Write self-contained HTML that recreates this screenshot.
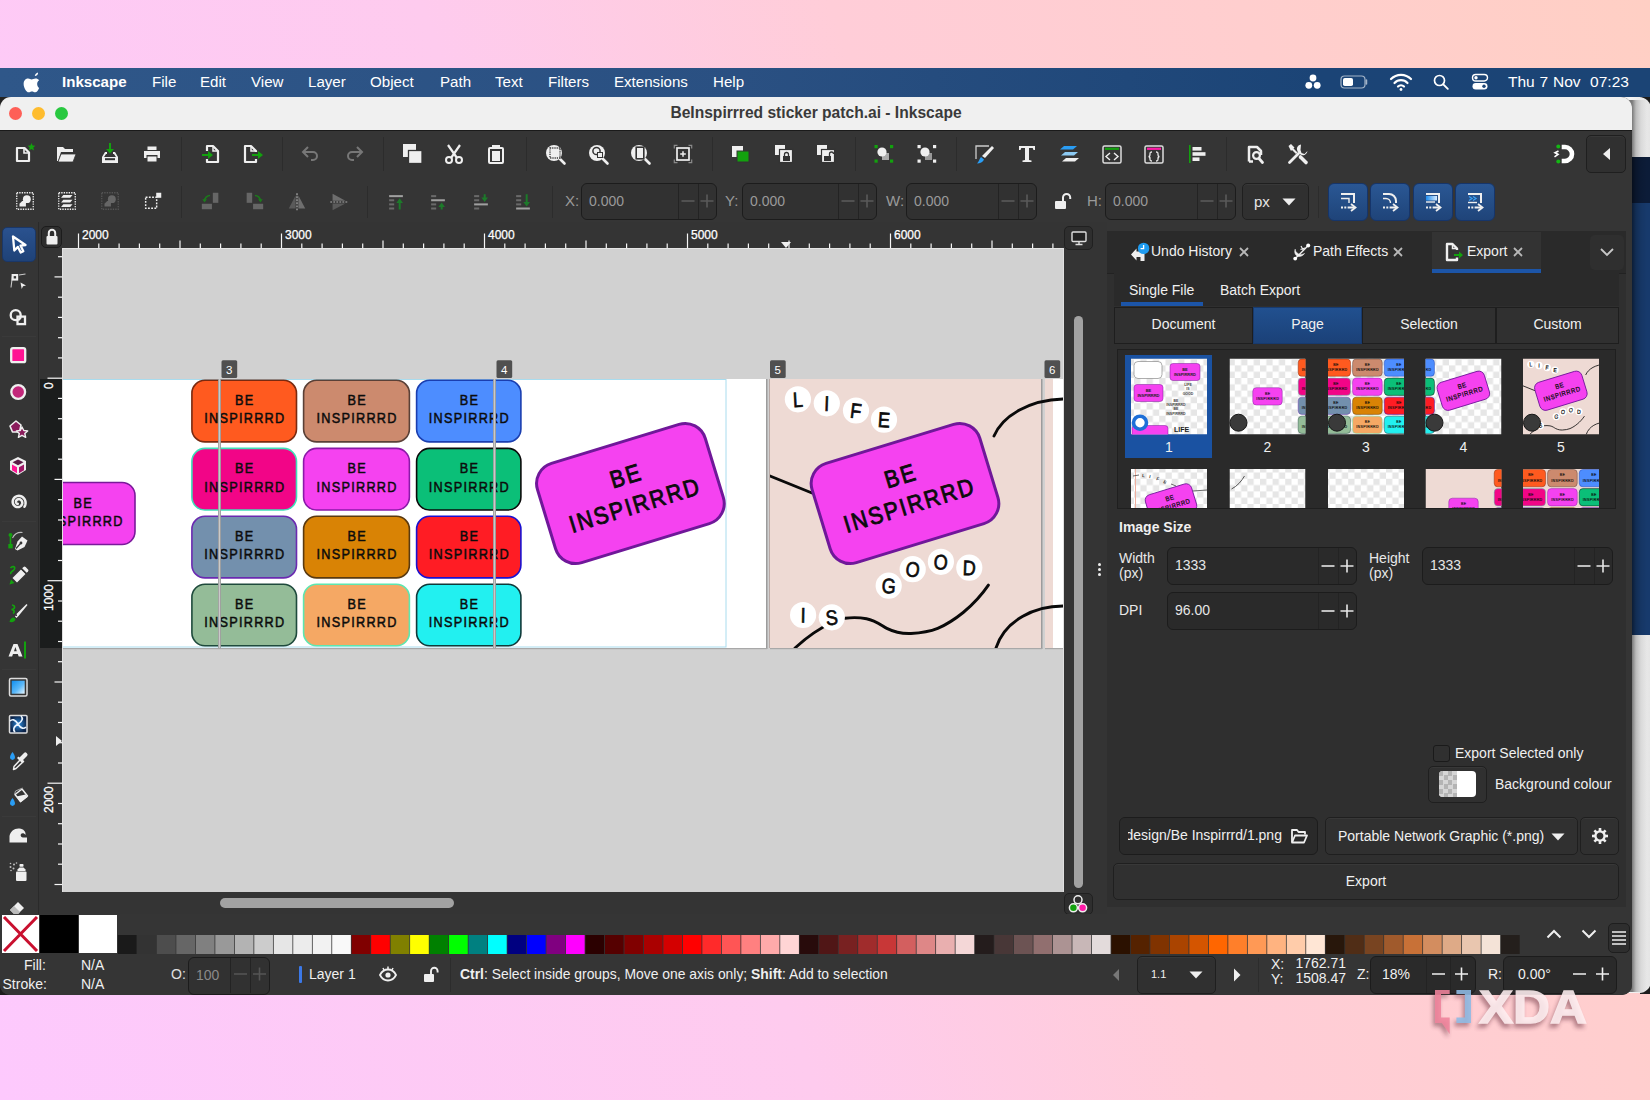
<!DOCTYPE html><html><head><meta charset="utf-8"><title>Inkscape</title><style>
*{box-sizing:border-box;margin:0;padding:0}
html,body{width:1650px;height:1100px;overflow:hidden}
body{position:relative;font-family:"Liberation Sans",sans-serif;font-size:14px;color:#e6e6e6;
 background:linear-gradient(70deg,#fdc9fd 0%,#fecbee 40%,#ffcdd8 60%,#ffcfc4 100%);}
.a{position:absolute}
.t{position:absolute;white-space:nowrap;line-height:1}
svg{position:absolute;overflow:visible}
.btn{position:absolute;background:#303030;border:1px solid #1f1f1f;border-radius:5px;box-shadow:inset 0 1px 0 rgba(255,255,255,.04)}
.inp{position:absolute;background:#2a2a2a;border:1px solid #1c1c1c;border-radius:6px}
.sep{position:absolute;width:1px;background:#2b2b2b}
</style></head><body>
<div class="a" style="left:1640px;top:97px;width:10px;height:897px;background:#1c1c1c"></div>
<div class="a" style="left:1600px;top:97px;width:50.5px;height:896px;background:linear-gradient(90deg,#f4f4f4 60%,#e4e4e4 100%);border-radius:12px;overflow:hidden"><div class="a" style="left:0;top:59.500px;width:60px;height:46px;background:#0c1c38"></div><div class="a" style="left:0;top:105.500px;width:60px;height:432.500px;background:#173a6c"></div></div>
<div class="a" style="left:0px;top:68.4px;width:1650px;height:29px;background:linear-gradient(90deg,#2f5789 0%,#2a5082 45%,#1b4476 80%,#1b4475 100%)"></div>
<div class="t" style="left:62px;top:71.95px;height:19.1px;line-height:19.1px;font-size:15.1px;color:#fff;font-weight:700;">Inkscape</div>
<div class="t" style="left:152px;top:71.95px;height:19.1px;line-height:19.1px;font-size:15.1px;color:#fff;font-weight:400;">File</div>
<div class="t" style="left:200px;top:71.95px;height:19.1px;line-height:19.1px;font-size:15.1px;color:#fff;font-weight:400;">Edit</div>
<div class="t" style="left:251px;top:71.95px;height:19.1px;line-height:19.1px;font-size:15.1px;color:#fff;font-weight:400;">View</div>
<div class="t" style="left:308px;top:71.95px;height:19.1px;line-height:19.1px;font-size:15.1px;color:#fff;font-weight:400;">Layer</div>
<div class="t" style="left:370px;top:71.95px;height:19.1px;line-height:19.1px;font-size:15.1px;color:#fff;font-weight:400;">Object</div>
<div class="t" style="left:440px;top:71.95px;height:19.1px;line-height:19.1px;font-size:15.1px;color:#fff;font-weight:400;">Path</div>
<div class="t" style="left:495px;top:71.95px;height:19.1px;line-height:19.1px;font-size:15.1px;color:#fff;font-weight:400;">Text</div>
<div class="t" style="left:548px;top:71.95px;height:19.1px;line-height:19.1px;font-size:15.1px;color:#fff;font-weight:400;">Filters</div>
<div class="t" style="left:614px;top:71.95px;height:19.1px;line-height:19.1px;font-size:15.1px;color:#fff;font-weight:400;">Extensions</div>
<div class="t" style="left:713px;top:71.95px;height:19.1px;line-height:19.1px;font-size:15.1px;color:#fff;font-weight:400;">Help</div>
<div class="t" style="left:1508px;top:71.75px;height:19.5px;line-height:19.5px;font-size:15.5px;color:#fff;font-weight:400;word-spacing:.5px">Thu 7 Nov&nbsp; 07:23</div>
<div class="a" style="left:0px;top:97px;width:14px;height:14px;background:#222"></div>
<div class="a" style="left:0px;top:982px;width:12px;height:12.5px;background:#1c1c1c"></div>
<div class="a" style="left:1626px;top:100px;width:22px;height:892px;background:linear-gradient(90deg,rgba(0,0,0,.5) 0,rgba(0,0,0,.5) 6px,rgba(0,0,0,.22) 10px,rgba(0,0,0,.08) 15px,rgba(0,0,0,0) 21px)"></div>
<div class="a" style="left:0px;top:97px;width:1632px;height:897.5px;background:#353535;border-radius:11px 11px 10px 10px;overflow:hidden"></div>
<div class="a" style="left:0px;top:97px;width:1632px;height:33.7px;background:#f0f0f0;border-radius:11px 11px 0 0;border-bottom:1.200px solid #1a1a1a"></div>
<div class="a" style="left:9.2px;top:106.5px;width:13px;height:13px;background:#fe5f57;border-radius:50%"></div>
<div class="a" style="left:32.2px;top:106.5px;width:13px;height:13px;background:#febc2e;border-radius:50%"></div>
<div class="a" style="left:55.2px;top:106.5px;width:13px;height:13px;background:#28c840;border-radius:50%"></div>
<div class="t" style="left:0;top:103px;width:1632px;text-align:center;font-size:15.600px;font-weight:700;color:#3a3a3a;line-height:20px">BeInspirrred sticker patch.ai - Inkscape</div>
<svg style="left:11.0px;top:141.8px" width="24" height="24" viewBox="-12 -12 24 24"><path d="M-6,-6h7.500l4.500,4.500v8.500h-12z" fill="none" stroke="#efefef" stroke-width="2.200" stroke-linejoin="round"/><path d="M1,-6v5h5" fill="none" stroke="#efefef" stroke-width="1.600"/><path d="M8.500,-11l1.100,2.600 2.800,.2-2.100,1.800 .7,2.800-2.500,-1.500-2.500,1.500 .7,-2.800-2.100,-1.800 2.800,-.2z" fill="#13a10e"/></svg>
<svg style="left:54.0px;top:141.8px" width="24" height="24" viewBox="-12 -12 24 24"><path d="M-9,7v-14h6l2,2h8v3h-12l-3,9z" fill="#efefef"/><path d="M-8,8l3,-8h15l-3,8z" fill="#efefef" stroke="#333" stroke-width=".8"/></svg>
<svg style="left:98.0px;top:141.8px" width="24" height="24" viewBox="-12 -12 24 24"><path d="M-8,9v-6l3,-5h2v2h-1l-2,3h12l-2,-3h-1v-2h2l3,5v6z" fill="#efefef"/><rect x="-5" y="4.2" width="10" height="2" fill="#333"/><path d="M-1,-11h2v6h3l-4,4.5-4,-4.5h3z" fill="#13a10e"/></svg>
<svg style="left:140.0px;top:141.8px" width="24" height="24" viewBox="-12 -12 24 24"><rect x="-4.500" y="-7.500" width="9" height="3.500" fill="#efefef"/><path d="M-8,-3h16v7h-2.500v-3h-11v3h-2.500z" fill="#efefef"/><rect x="-4.500" y="2.500" width="9" height="5" fill="#efefef"/></svg>
<svg style="left:199.0px;top:141.8px" width="24" height="24" viewBox="-12 -12 24 24"><path d="M-4,-3v-5h6l5,5v11h-11v-3" fill="none" stroke="#efefef" stroke-width="2.200" stroke-linejoin="round"/><path d="M2,-8v5h5" fill="none" stroke="#efefef" stroke-width="1.500"/><path d="M-9,0h6v-3l5,4-5,4v-3h-6z" fill="#13a10e"/></svg>
<svg style="left:240.0px;top:141.8px" width="24" height="24" viewBox="-12 -12 24 24"><path d="M4,-2v-1l-5,-5h-6v16h11v-3" fill="none" stroke="#efefef" stroke-width="2.200" stroke-linejoin="round"/><path d="M-1,-8v5h5" fill="none" stroke="#efefef" stroke-width="1.500"/><path d="M0,0h6v-3l5,4-5,4v-3h-6z" fill="#13a10e"/></svg>
<svg style="left:299.0px;top:141.8px" width="24" height="24" viewBox="-12 -12 24 24"><path d="M-7,-2h9a4,4 0 0 1 0,8h-2" fill="none" stroke="#777" stroke-width="2"/><path d="M-3,-7l-5,5 5,5" fill="none" stroke="#777" stroke-width="2"/></svg>
<svg style="left:342.0px;top:141.8px" width="24" height="24" viewBox="-12 -12 24 24"><path d="M7,-2h-9a4,4 0 0 0 0,8h2" fill="none" stroke="#777" stroke-width="2"/><path d="M3,-7l5,5-5,5" fill="none" stroke="#777" stroke-width="2"/></svg>
<svg style="left:399.0px;top:141.8px" width="24" height="24" viewBox="-12 -12 24 24"><rect x="-8" y="-10" width="13" height="13" fill="#efefef" /><rect x="-2.500" y="-3.500" width="13.500" height="13" fill="#efefef" stroke="#353535" stroke-width="1.300"/></svg>
<svg style="left:442.0px;top:141.8px" width="24" height="24" viewBox="-12 -12 24 24"><path d="M-6,-9l9,13M6,-9l-9,13" stroke="#efefef" stroke-width="2.2" fill="none"/><circle cx="-5" cy="6" r="3" fill="none" stroke="#efefef" stroke-width="2"/><circle cx="5" cy="6" r="3" fill="none" stroke="#efefef" stroke-width="2"/></svg>
<svg style="left:484.0px;top:141.8px" width="24" height="24" viewBox="-12 -12 24 24"><rect x="-7" y="-6" width="14" height="15" rx="1" fill="none" stroke="#efefef" stroke-width="2"/><rect x="-4" y="-9" width="8" height="4" fill="#efefef"/><rect x="-4" y="-3" width="8" height="10" fill="#efefef"/></svg>
<svg style="left:543.0px;top:141.8px" width="24" height="24" viewBox="-12 -12 24 24"><circle cx="-1" cy="-1" r="8" fill="#efefef"/><path d="M5,5l4.5,4.5" stroke="#efefef" stroke-width="2.6" stroke-linecap="round"/><rect x="-5" y="-6" width="10" height="10" fill="none" stroke="#333" stroke-width="1.300" stroke-dasharray="1.200 1"/></svg>
<svg style="left:586.0px;top:141.8px" width="24" height="24" viewBox="-12 -12 24 24"><circle cx="-1" cy="-1" r="8" fill="#efefef"/><path d="M5,5l4.5,4.5" stroke="#efefef" stroke-width="2.6" stroke-linecap="round"/><circle cx="-1.500" cy="-3" r="3.600" fill="none" stroke="#333" stroke-width="1.500"/><rect x="-1" y="-2" width="6" height="6" fill="#333"/><rect x="0" y="-1" width="4" height="4" fill="#efefef"/></svg>
<svg style="left:628.0px;top:141.8px" width="24" height="24" viewBox="-12 -12 24 24"><circle cx="-1" cy="-1" r="8" fill="#efefef"/><path d="M5,5l4.5,4.5" stroke="#efefef" stroke-width="2.6" stroke-linecap="round"/><rect x="-3.800" y="-6.800" width="7.600" height="11.600" fill="none" stroke="#333" stroke-width="1.600"/></svg>
<svg style="left:671.0px;top:141.8px" width="24" height="24" viewBox="-12 -12 24 24"><rect x="-6" y="-6" width="12" height="12" fill="none" stroke="#efefef" stroke-width="1.700"/><path d="M-2.800,0h5.600M0,-2.800v5.600" stroke="#efefef" stroke-width="1.500"/><path d="M-8.700,-5.500v-3.200h3.200M5.500,-8.700h3.200v3.200M8.700,5.500v3.200h-3.200M-5.500,8.700h-3.200v-3.200" fill="none" stroke="#8a8a8a" stroke-width="1.200"/></svg>
<svg style="left:729.0px;top:141.8px" width="24" height="24" viewBox="-12 -12 24 24"><rect x="-9" y="-8" width="11" height="11" fill="#efefef"/><rect x="-4" y="-3" width="12" height="11" fill="#13a10e" stroke="#333" stroke-width="1"/></svg>
<svg style="left:771.5px;top:141.8px" width="24" height="24" viewBox="-12 -12 24 24"><rect x="-9" y="-9" width="10" height="10" fill="#efefef"/><rect x="-4.5" y="-4.5" width="13" height="13" fill="#efefef" stroke="#333" stroke-width="1.2"/><rect x="-1" y="2" width="7" height="5" fill="#333"/><path d="M.5,2v-1.5a2,2 0 0 1 4,0v1.5" fill="none" stroke="#333" stroke-width="1.3"/></svg>
<svg style="left:814.0px;top:141.8px" width="24" height="24" viewBox="-12 -12 24 24"><rect x="-9" y="-9" width="10" height="10" fill="#efefef"/><rect x="-4.5" y="-4.5" width="13" height="13" fill="#efefef" stroke="#333" stroke-width="1.2"/><rect x="-2" y="2" width="7" height="5" fill="#333"/><path d="M3.5,2v-2a2,2 0 0 1 4,0" fill="none" stroke="#333" stroke-width="1.3"/></svg>
<svg style="left:872.0px;top:141.8px" width="24" height="24" viewBox="-12 -12 24 24"><rect x="-2" y="-1" width="7" height="7" fill="#aaa"/><circle cx="-2" cy="-2" r="4.6" fill="#efefef"/><rect x="-9.5" y="-9" width="3.2" height="3.2" fill="#13a10e"/><rect x="6" y="-9" width="3.2" height="3.2" fill="#13a10e"/><rect x="-9.5" y="5.5" width="3.2" height="3.2" fill="#13a10e"/><rect x="6" y="5.5" width="3.2" height="3.2" fill="#13a10e"/></svg>
<svg style="left:915.0px;top:141.8px" width="24" height="24" viewBox="-12 -12 24 24"><rect x="-2" y="-1" width="7" height="7" fill="#999"/><circle cx="-2" cy="-2" r="4.6" fill="#efefef"/><rect x="-9.5" y="-9" width="3.2" height="3.2" fill="#efefef"/><rect x="6" y="-9" width="3.2" height="3.2" fill="#efefef"/><rect x="-9.5" y="5.5" width="3.2" height="3.2" fill="#efefef"/><rect x="6" y="5.5" width="3.2" height="3.2" fill="#efefef"/></svg>
<svg style="left:972.0px;top:141.8px" width="24" height="24" viewBox="-12 -12 24 24"><path d="M-8,5v-13h13" fill="none" stroke="#ccc" stroke-width="1.3"/><path d="M8,-8l2,2-9,10-3,-2z" fill="#efefef"/><path d="M-3,3l3,2.4c-1,2.5-4,4-7,4 2,-1.5 2,-4 4,-6.4z" fill="#2a9df4"/></svg>
<svg style="left:1015.0px;top:141.8px" width="24" height="24" viewBox="-12 -12 24 24"><path d="M-8,-8h16v4h-1.5l-.8,-2h-3.7v12l2.5,.6v1.4h-9v-1.4l2.5,-.6v-12h-3.700l-.8,2h-1.5z" fill="#efefef"/></svg>
<svg style="left:1057.0px;top:141.8px" width="24" height="24" viewBox="-12 -12 24 24"><path d="M-5,-8h13l-4,3.6h-13z" fill="#2a9df4"/><path d="M-4,-2h13l-4,3.600h-13z" fill="#8ccaf3"/><path d="M-3,4h13l-4,3.600h-13z" fill="#efefef"/></svg>
<svg style="left:1100.0px;top:141.8px" width="24" height="24" viewBox="-12 -12 24 24"><rect x="-9" y="-8" width="18" height="17" rx="1.5" fill="none" stroke="#ddd" stroke-width="1.5"/><rect x="-7" y="-6.300" width="14" height="2.200" fill="#13a10e"/><path d="M-2,-1l-4,3.500 4,3.500M2,-1l4,3.500-4,3.500" fill="none" stroke="#efefef" stroke-width="1.4"/></svg>
<svg style="left:1142.0px;top:141.8px" width="24" height="24" viewBox="-12 -12 24 24"><rect x="-9" y="-8" width="18" height="17" rx="1.5" fill="none" stroke="#ddd" stroke-width="1.5"/><rect x="-7" y="-6.300" width="14" height="2.200" fill="#ff1aa8"/><path d="M-2,-2c-2,0-2,.5-2,2s0,2.500-1.500,2.500c1.500,0 1.500,1 1.500,2.500s0,2 2,2M2,-2c2,0 2,.5 2,2s0,2.500 1.500,2.500c-1.500,0-1.500,1-1.500,2.500s0,2-2,2" fill="none" stroke="#efefef" stroke-width="1.300"/></svg>
<svg style="left:1185.0px;top:141.8px" width="24" height="24" viewBox="-12 -12 24 24"><rect x="-8" y="-9" width="1.600" height="18" fill="#13a10e"/><rect x="-4.500" y="-7" width="9" height="3.600" fill="#efefef"/><rect x="-4.500" y="-1.800" width="13" height="3.600" fill="#efefef"/><rect x="-4.500" y="3.400" width="7" height="3.600" fill="#efefef"/></svg>
<svg style="left:1243.0px;top:141.8px" width="24" height="24" viewBox="-12 -12 24 24"><path d="M-6,7.500v-14.500h8l4,4v4" fill="none" stroke="#efefef" stroke-width="2.500" stroke-linejoin="round"/><path d="M-6,7.500h4" stroke="#efefef" stroke-width="2.500"/><circle cx="1.500" cy="1.500" r="3.400" fill="none" stroke="#efefef" stroke-width="2.200"/><path d="M4,4.500l3.500,4" stroke="#efefef" stroke-width="2.800" stroke-linecap="round"/></svg>
<svg style="left:1286.0px;top:141.8px" width="24" height="24" viewBox="-12 -12 24 24"><path d="M-8.500,8.500l9,-9" stroke="#efefef" stroke-width="2.800" stroke-linecap="round"/><path d="M3,-9.500a4.600,4.600 0 0 0-3.500,7l3,3a4.600,4.600 0 0 0 7,-3.500l-3,3-3,-1-1,-3z" fill="#efefef"/><path d="M-9.500,-8l2.500,-2 3.500,3.500-1,1 4,4-1.500,1.500-4,-4-1,1z" fill="#efefef"/><path d="M2.500,3l5.500,5.500" stroke="#efefef" stroke-width="3.600" stroke-linecap="round"/></svg>
<svg style="left:1553.3px;top:141.8px" width="24" height="24" viewBox="-12 -12 24 24"><path d="M-3.300,-7H0A7,7 0 0 1 0,7H-3.300" fill="none" stroke="#fff" stroke-width="4.600"/><circle cx="-6.700" cy="-7.500" r="2" fill="#14b814"/><circle cx="-6.700" cy="7.500" r="2" fill="#14b814"/><path d="M-6.500,-3l-3.500,1.800 3,1.600-3.500,2.400" fill="none" stroke="#fff" stroke-width="1.600"/></svg>
<div class="a" style="left:181px;top:137px;width:1px;height:34px;background:#2c2c2c"></div>
<div class="a" style="left:282px;top:137px;width:1px;height:34px;background:#2c2c2c"></div>
<div class="a" style="left:383px;top:137px;width:1px;height:34px;background:#2c2c2c"></div>
<div class="a" style="left:526px;top:137px;width:1px;height:34px;background:#2c2c2c"></div>
<div class="a" style="left:712px;top:137px;width:1px;height:34px;background:#2c2c2c"></div>
<div class="a" style="left:855px;top:137px;width:1px;height:34px;background:#2c2c2c"></div>
<div class="a" style="left:956px;top:137px;width:1px;height:34px;background:#2c2c2c"></div>
<div class="a" style="left:1226px;top:137px;width:1px;height:34px;background:#2c2c2c"></div>
<div class="btn" style="left:1586px;top:134.5px;width:40px;height:38px;"></div>
<svg style="left:1594.5px;top:141.5px" width="24" height="24" viewBox="-12 -12 24 24"><path d="M3,-6v12l-7,-6z" fill="#efefef"/></svg>
<svg style="left:13.5px;top:189.5px" width="22" height="22" viewBox="-12 -12 24 24"><rect x="-9" y="-9" width="18" height="18" fill="none" stroke="#efefef" stroke-width="1.400" stroke-dasharray="1.500 1.200"/><circle cx="2" cy="-2" r="4.300" fill="#efefef"/><path d="M-6,6v-3l3,-3h4v6z" fill="#efefef"/></svg>
<svg style="left:55.5px;top:189.5px" width="22" height="22" viewBox="-12 -12 24 24"><rect x="-9" y="-9" width="18" height="18" fill="none" stroke="#efefef" stroke-width="1.400" stroke-dasharray="1.500 1.200"/><path d="M-4,-6.500h10l-2.500,3h-10z M-4,-1.500h10l-2.500,3h-10z M-4,3.500h10l-2.500,3h-10z" fill="#efefef"/></svg>
<svg style="left:98.5px;top:189.5px" width="22" height="22" viewBox="-12 -12 24 24"><rect x="-9" y="-9" width="18" height="18" fill="none" stroke="#555" stroke-width="1.400" stroke-dasharray="1.500 1.200"/><circle cx="2" cy="-2" r="4.300" fill="#666"/><path d="M-6,6v-3l3,-3h4v6z" fill="#666"/></svg>
<svg style="left:141.5px;top:189.5px" width="22" height="22" viewBox="-12 -12 24 24"><rect x="-8" y="-4" width="12" height="12" fill="none" stroke="#efefef" stroke-width="1.600" stroke-dasharray="2 1.500"/><rect x="3.500" y="-9" width="5.500" height="5.500" fill="#efefef"/></svg>
<svg style="left:199.5px;top:189.5px" width="22" height="22" viewBox="-12 -12 24 24"><rect x="2" y="-9" width="6" height="11" fill="#666"/><rect x="-10" y="3" width="11" height="6" fill="#666"/><path d="M-1,-6a6,6 0 0 0-6,6" fill="none" stroke="#1c7a1c" stroke-width="1.800"/><path d="M-9.500,-2l2.500,3.500 2.500,-3.500z" fill="#1c7a1c"/></svg>
<svg style="left:242.5px;top:189.5px" width="22" height="22" viewBox="-12 -12 24 24"><rect x="-8" y="-9" width="6" height="11" fill="#666"/><rect x="-1" y="3" width="11" height="6" fill="#666"/><path d="M1,-6a6,6 0 0 1 6,6" fill="none" stroke="#1c7a1c" stroke-width="1.800"/><path d="M9.500,-2l-2.500,3.500-2.500,-3.500z" fill="#1c7a1c"/></svg>
<svg style="left:285.5px;top:190.5px" width="22" height="22" viewBox="-12 -12 24 24"><path d="M-1.500,-7v14h-7.500z" fill="#5a5a5a"/><path d="M1.500,-7v14h7.500z" fill="#6e6e6e"/><path d="M0,-9.500v19" stroke="#b0b0b0" stroke-width="1.300" stroke-dasharray="2 1.300"/></svg>
<svg style="left:327.5px;top:190.5px" width="22" height="22" viewBox="-12 -12 24 24"><path d="M-7,-1.500h14l-14,-7.500z" fill="#6e6e6e"/><path d="M-7,1.500h14l-14,7.500z" fill="#5a5a5a"/><path d="M-9.500,0h19" stroke="#b0b0b0" stroke-width="1.300" stroke-dasharray="2 1.300"/></svg>
<svg style="left:384.5px;top:190.5px" width="22" height="22" viewBox="-12 -12 24 24"><rect x="-7.500" y="-7.5" width="15" height="2.200" fill="#a0a0a0"/><rect x="-7.500" y="-3" width="5.500" height="2.200" fill="#6a6a6a"/><rect x="-7.500" y="1.5" width="5.500" height="2.200" fill="#6a6a6a"/><rect x="-7.500" y="6" width="5.500" height="2.200" fill="#6a6a6a"/><path d="M4,8.2V-0.5" stroke="#1d7a2a" stroke-width="2.200"/><path d="M0.3999999999999999,1.0l3.600,-5 3.600,5z" fill="#1d7a2a"/></svg>
<svg style="left:426.5px;top:190.5px" width="22" height="22" viewBox="-12 -12 24 24"><rect x="-7.500" y="-7.5" width="5.500" height="2.200" fill="#6a6a6a"/><rect x="-7.500" y="-3" width="15" height="2.200" fill="#a0a0a0"/><rect x="-7.500" y="1.5" width="5.500" height="2.200" fill="#6a6a6a"/><rect x="-7.500" y="6" width="5.500" height="2.200" fill="#6a6a6a"/><path d="M4,8.2V4" stroke="#1d7a2a" stroke-width="2.200"/><path d="M0.3999999999999999,5.5l3.600,-5 3.600,5z" fill="#1d7a2a"/></svg>
<svg style="left:469.5px;top:190.5px" width="22" height="22" viewBox="-12 -12 24 24"><rect x="-7.500" y="-7.5" width="5.500" height="2.200" fill="#6a6a6a"/><rect x="-7.500" y="-3" width="5.500" height="2.200" fill="#6a6a6a"/><rect x="-7.500" y="1.5" width="15" height="2.200" fill="#a0a0a0"/><rect x="-7.500" y="6" width="5.500" height="2.200" fill="#6a6a6a"/><path d="M4,-8.5V-3.5" stroke="#1d7a2a" stroke-width="2.200"/><path d="M0.3999999999999999,-5.0l3.600,5 3.600,-5z" fill="#1d7a2a"/></svg>
<svg style="left:511.5px;top:190.5px" width="22" height="22" viewBox="-12 -12 24 24"><rect x="-7.500" y="-7.5" width="5.500" height="2.200" fill="#6a6a6a"/><rect x="-7.500" y="-3" width="5.500" height="2.200" fill="#6a6a6a"/><rect x="-7.500" y="1.5" width="5.500" height="2.200" fill="#6a6a6a"/><rect x="-7.500" y="6" width="15" height="2.200" fill="#a0a0a0"/><path d="M4,-8.5V1.5" stroke="#1d7a2a" stroke-width="2.200"/><path d="M0.3999999999999999,0.0l3.600,5 3.600,-5z" fill="#1d7a2a"/></svg>
<div class="a" style="left:181px;top:186px;width:1px;height:32px;background:#2c2c2c"></div>
<div class="a" style="left:367px;top:186px;width:1px;height:32px;background:#2c2c2c"></div>
<div class="a" style="left:552px;top:186px;width:1px;height:32px;background:#2c2c2c"></div>
<div class="a" style="left:1318px;top:186px;width:1px;height:32px;background:#2c2c2c"></div>
<div class="t" style="left:565px;top:191.25px;height:19px;line-height:19px;font-size:15px;color:#9a9a9a;font-weight:400;">X:</div>
<div class="inp" style="left:581px;top:182.5px;width:136px;height:37.5px;background:#313131"></div>
<div class="t" style="left:589px;top:191.75px;height:18px;line-height:18px;font-size:14px;color:#9a9a9a;font-weight:400;">0.000</div>
<div class="a" style="left:678px;top:183.5px;width:1px;height:35.5px;background:#232323"></div>
<div class="a" style="left:697.5px;top:183.5px;width:1px;height:35.5px;background:#232323"></div>
<svg style="left:680px;top:193.25px" width="16" height="16" viewBox="-8 -8 16 16"><path d="M-6.500,0h13" stroke="#5a5a5a" stroke-width="1.600"/></svg>
<svg style="left:699px;top:193.25px" width="16" height="16" viewBox="-8 -8 16 16"><path d="M-6.500,0h13M0,-6.500v13" stroke="#5a5a5a" stroke-width="1.600"/></svg>
<div class="t" style="left:725px;top:191.25px;height:19px;line-height:19px;font-size:15px;color:#9a9a9a;font-weight:400;">Y:</div>
<div class="inp" style="left:742px;top:182.5px;width:135px;height:37.5px;background:#313131"></div>
<div class="t" style="left:750px;top:191.75px;height:18px;line-height:18px;font-size:14px;color:#9a9a9a;font-weight:400;">0.000</div>
<div class="a" style="left:838px;top:183.5px;width:1px;height:35.5px;background:#232323"></div>
<div class="a" style="left:857.5px;top:183.5px;width:1px;height:35.5px;background:#232323"></div>
<svg style="left:840px;top:193.25px" width="16" height="16" viewBox="-8 -8 16 16"><path d="M-6.500,0h13" stroke="#5a5a5a" stroke-width="1.600"/></svg>
<svg style="left:859px;top:193.25px" width="16" height="16" viewBox="-8 -8 16 16"><path d="M-6.500,0h13M0,-6.500v13" stroke="#5a5a5a" stroke-width="1.600"/></svg>
<div class="t" style="left:886px;top:191.25px;height:19px;line-height:19px;font-size:15px;color:#9a9a9a;font-weight:400;">W:</div>
<div class="inp" style="left:906px;top:182.5px;width:131px;height:37.5px;background:#313131"></div>
<div class="t" style="left:914px;top:191.75px;height:18px;line-height:18px;font-size:14px;color:#9a9a9a;font-weight:400;">0.000</div>
<div class="a" style="left:998px;top:183.5px;width:1px;height:35.5px;background:#232323"></div>
<div class="a" style="left:1017.5px;top:183.5px;width:1px;height:35.5px;background:#232323"></div>
<svg style="left:1000px;top:193.25px" width="16" height="16" viewBox="-8 -8 16 16"><path d="M-6.500,0h13" stroke="#5a5a5a" stroke-width="1.600"/></svg>
<svg style="left:1019px;top:193.25px" width="16" height="16" viewBox="-8 -8 16 16"><path d="M-6.500,0h13M0,-6.500v13" stroke="#5a5a5a" stroke-width="1.600"/></svg>
<div class="t" style="left:1087px;top:191.25px;height:19px;line-height:19px;font-size:15px;color:#9a9a9a;font-weight:400;">H:</div>
<div class="inp" style="left:1105px;top:182.5px;width:131px;height:37.5px;background:#313131"></div>
<div class="t" style="left:1113px;top:191.75px;height:18px;line-height:18px;font-size:14px;color:#9a9a9a;font-weight:400;">0.000</div>
<div class="a" style="left:1197px;top:183.5px;width:1px;height:35.5px;background:#232323"></div>
<div class="a" style="left:1216.5px;top:183.5px;width:1px;height:35.5px;background:#232323"></div>
<svg style="left:1199px;top:193.25px" width="16" height="16" viewBox="-8 -8 16 16"><path d="M-6.500,0h13" stroke="#5a5a5a" stroke-width="1.600"/></svg>
<svg style="left:1218px;top:193.25px" width="16" height="16" viewBox="-8 -8 16 16"><path d="M-6.500,0h13M0,-6.500v13" stroke="#5a5a5a" stroke-width="1.600"/></svg>
<svg style="left:1051.0px;top:188.5px" width="24" height="24" viewBox="-12 -12 24 24"><rect x="-8" y="0" width="11" height="8" rx="1" fill="#efefef"/><path d="M0,0v-3.500a3.600,3.600 0 0 1 7.200,0v1.500" fill="none" stroke="#efefef" stroke-width="2"/></svg>
<div class="btn" style="left:1242px;top:183px;width:67px;height:37px;"></div>
<div class="t" style="left:1254px;top:191.5px;height:19px;line-height:19px;font-size:15px;color:#e6e6e6;font-weight:400;">px</div>
<svg style="left:1277.0px;top:189.5px" width="24" height="24" viewBox="-12 -12 24 24"><path d="M-6.500,-3.500h13l-6.500,7z" fill="#efefef"/></svg>
<div class="a" style="left:1327.5px;top:182.5px;width:40px;height:38px;background:linear-gradient(#2a5794,#1f4479);border:1px solid #16356a;border-radius:6px"></div>
<div class="a" style="left:1370px;top:182.5px;width:40px;height:38px;background:linear-gradient(#2a5794,#1f4479);border:1px solid #16356a;border-radius:6px"></div>
<div class="a" style="left:1412.5px;top:182.5px;width:40px;height:38px;background:linear-gradient(#2a5794,#1f4479);border:1px solid #16356a;border-radius:6px"></div>
<div class="a" style="left:1455px;top:182.5px;width:40px;height:38px;background:linear-gradient(#2a5794,#1f4479);border:1px solid #16356a;border-radius:6px"></div>
<svg style="left:1335.5px;top:189.0px" width="24" height="24" viewBox="-12 -12 24 24"><path d="M-7,-7h13v9" fill="none" stroke="#efefef" stroke-width="2"/><path d="M-7,-2.500h8v4.500" fill="none" stroke="#efefef" stroke-width="1.400"/><path d="M-7,6.500h8" stroke="#efefef" stroke-width="2" stroke-dasharray="2 1.300"/><path d="M1,6.500h5" stroke="#efefef" stroke-width="2"/><path d="M3,3l4.500,3.500-4.500,3.500" fill="none" stroke="#efefef" stroke-width="1.800"/></svg>
<svg style="left:1378.0px;top:189.0px" width="24" height="24" viewBox="-12 -12 24 24"><path d="M-7,-7h6a7,7 0 0 1 7,7v2" fill="none" stroke="#efefef" stroke-width="2"/><path d="M-7,-2.500h3a4.500,4.500 0 0 1 4.500,4.500" fill="none" stroke="#efefef" stroke-width="1.400"/><path d="M-7,6.500h8" stroke="#efefef" stroke-width="2" stroke-dasharray="2 1.300"/><path d="M1,6.500h5" stroke="#efefef" stroke-width="2"/><path d="M3,3l4.500,3.500-4.500,3.500" fill="none" stroke="#efefef" stroke-width="1.800"/></svg>
<svg style="left:1420.5px;top:189.0px" width="24" height="24" viewBox="-12 -12 24 24"><defs><linearGradient id="bg3" x1="0" x2="1"><stop offset="0" stop-color="#1d8cf0"/><stop offset="1" stop-color="#d8ecff"/></linearGradient></defs><path d="M-7,-7h13v9" fill="none" stroke="#efefef" stroke-width="2"/><rect x="-7" y="-5" width="11" height="4.500" fill="url(#bg3)"/><path d="M-7,1h9" stroke="#efefef" stroke-width="1.400"/><path d="M-7,6.500h8" stroke="#efefef" stroke-width="2" stroke-dasharray="2 1.300"/><path d="M1,6.500h5" stroke="#efefef" stroke-width="2"/><path d="M3,3l4.500,3.500-4.500,3.500" fill="none" stroke="#efefef" stroke-width="1.800"/></svg>
<svg style="left:1463.0px;top:189.0px" width="24" height="24" viewBox="-12 -12 24 24"><path d="M-7,-7h13v9" fill="none" stroke="#efefef" stroke-width="2"/><path d="M-6,-4.500l3,2-3,2M-2,-4.500l3,2-3,2" fill="none" stroke="#3aa0f5" stroke-width="1.300"/><path d="M-7,1.500h9" stroke="#efefef" stroke-width="1.400"/><path d="M-7,6.500h8" stroke="#efefef" stroke-width="2" stroke-dasharray="2 1.300"/><path d="M1,6.500h5" stroke="#efefef" stroke-width="2"/><path d="M3,3l4.500,3.500-4.500,3.500" fill="none" stroke="#efefef" stroke-width="1.800"/></svg>
<div class="a" style="left:0px;top:222px;width:38px;height:692px;background:#353535"></div>
<div class="a" style="left:38px;top:222px;width:1px;height:692px;background:#2a2a2a"></div>
<div class="a" style="left:1.5px;top:226.5px;width:34.5px;height:35.5px;background:linear-gradient(#2a528f,#1f4278);border:1px solid #1a3768;border-radius:5px"></div>
<div class="a" style="left:0;top:222px;width:38px;height:692px;overflow:hidden">
<svg style="left:6px;top:10px" width="24" height="24" viewBox="-12 -12 24 24"><path d="M-5,-7.500l1.300,14 3.600,-3.600 2.800,5.600 2.600,-1.300-2.800,-5.600 5,-.6z" fill="#1f4a87" stroke="#fff" stroke-width="2.300" stroke-linejoin="round"/></svg>
<svg style="left:6px;top:47px" width="24" height="24" viewBox="-12 -12 24 24"><path d="M-7,6.500l1.500,-12M1,-6l6.500,-1" fill="none" stroke="#c8c8c8" stroke-width="1.100"/><rect x="-6.400" y="-7" width="6.600" height="6.600" fill="#efefef"/><rect x="-4.300" y="-4.900" width="2.400" height="2.400" fill="#353535"/><path d="M2.500,1.500l5.500,3-3,.7-1.300,2.800z" fill="#efefef"/></svg>
<svg style="left:6px;top:84px" width="24" height="24" viewBox="-12 -12 24 24"><circle cx="-2.300" cy="-2.800" r="5" fill="none" stroke="#efefef" stroke-width="2.300"/><rect x="-.500" y="-1.400" width="7.500" height="7.500" fill="none" stroke="#efefef" stroke-width="2.300"/><path d="M.600,2.500l2.500,-2.700" stroke="#efefef" stroke-width="1.200"/></svg>
<svg style="left:6px;top:121px" width="24" height="24" viewBox="-12 -12 24 24"><rect x="-6.800" y="-6.800" width="14" height="14" rx="1.800" fill="#ff1493" stroke="#efefef" stroke-width="2.300"/></svg>
<svg style="left:6px;top:158px" width="24" height="24" viewBox="-12 -12 24 24"><circle cx="0.200" cy="0" r="6.900" fill="#c2277a" stroke="#efefef" stroke-width="2.300"/></svg>
<svg style="left:6px;top:195px" width="24" height="24" viewBox="-12 -12 24 24"><path d="M-8,-3l6,-5 5,4-1.500,7h-7z" fill="#8a1c5c" stroke="#efefef" stroke-width="1.600" stroke-linejoin="round"/><path d="M4,-2l1.800,3.500 3.900,.4-2.900,2.600 .9,3.800-3.700,-2-3.600,2 .9,-3.800-2.900,-2.600 3.900,-.4z" fill="#8a1c5c" stroke="#efefef" stroke-width="1.400" stroke-linejoin="round"/></svg>
<svg style="left:6px;top:232px" width="24" height="24" viewBox="-12 -12 24 24"><path d="M0,-9l8,4v9l-8,5-8,-5v-9z" fill="#efefef"/><path d="M0,-6.500l5.500,2.800-5.500,3-5.500,-3z" fill="#5a1a45"/><path d="M-6,-1.500l5,2.800v6l-5,-3.100z" fill="#ff1493"/><path d="M6,-1.500l-5,2.800v6l5,-3.100z" fill="#a01868"/></svg>
<svg style="left:6px;top:268px" width="24" height="24" viewBox="-12 -12 24 24"><path d="M-0.19,1.82 L-0.47,1.80 L-0.75,1.72 L-1.03,1.60 L-1.29,1.41 L-1.53,1.18 L-1.73,0.90 L-1.88,0.58 L-1.98,0.22 L-2.03,-0.17 L-2.00,-0.56 L-1.91,-0.96 L-1.74,-1.36 L-1.50,-1.73 L-1.20,-2.06 L-0.83,-2.35 L-0.41,-2.58 L0.05,-2.75 L0.55,-2.83 L1.07,-2.83 L1.60,-2.75 L2.12,-2.57 L2.62,-2.30 L3.07,-1.95 L3.47,-1.52 L3.80,-1.02 L4.05,-0.45 L4.21,0.16 L4.27,0.80 L4.22,1.46 L4.06,2.11 L3.79,2.74 L3.41,3.33 L2.94,3.86 L2.37,4.31 L1.72,4.67 L1.01,4.93 L0.26,5.07 L-0.52,5.09 L-1.31,4.97 L-2.08,4.73 L-2.82,4.36 L-3.49,3.86 L-4.09,3.25 L-4.58,2.54 L-4.96,1.75 L-5.21,0.90 L-5.32,-0.00 L-5.28,-0.92 L-5.09,-1.84 L-4.75,-2.72 L-4.27,-3.55 L-3.64,-4.30 L-2.90,-4.94 L-2.04,-5.47 L-1.11,-5.86 L-0.10,-6.09 L0.94,-6.15 L1.99,-6.05 L3.03,-5.77 L4.01,-5.33 L4.93,-4.72 L5.74,-3.96 L6.43,-3.07 L6.98,-2.07 L7.36,-0.98 L7.56,0.17 L7.57,1.35 L7.39,2.53 L7.01,3.68 L6.45,4.77" fill="none" stroke="#efefef" stroke-width="2.500" stroke-linecap="round"/></svg>
<svg style="left:6px;top:306px" width="24" height="24" viewBox="-12 -12 24 24"><path d="M-7.500,5v-8" stroke="#13a10e" stroke-width="1.600"/><circle cx="-7.500" cy="-5" r="2" fill="#13a10e"/><rect x="-9.700" y="4" width="4.400" height="4.400" fill="#13a10e"/><path d="M-5.500,-2c2,-4 6,-6 10,-5.500" fill="none" stroke="#bbb" stroke-width="1.100"/><path d="M4,-3.500l5.500,4-3,6.500-7,3.500-2.500,-1.500 2.500,-7.500z" fill="#efefef"/><path d="M-2,8.500l4.500,-5" stroke="#353535" stroke-width="1.200"/><circle cx="3" cy="3" r="1.400" fill="#353535"/></svg>
<svg style="left:6px;top:342px" width="24" height="24" viewBox="-12 -12 24 24"><path d="M-7.500,-8c2,-2.500 5,-1.500 4,1s-5,2.500-3.500,5" fill="none" stroke="#13a10e" stroke-width="1.700"/><path d="M-8.500,8.500l1.500,-5 3.500,3.500z" fill="#13a10e"/><path d="M-5.500,2l8.500,-8.500 4.500,4.500-8.500,8.500z" fill="#efefef"/><path d="M4.200,-7.700l1.300,-1.300a1.500,1.500 0 0 1 2.100,0l2.400,2.400a1.500,1.500 0 0 1 0,2.100l-1.300,1.300z" fill="#efefef"/><path d="M3.300,-6.800l4.500,4.500" stroke="#353535" stroke-width=".9"/></svg>
<svg style="left:6px;top:379px" width="24" height="24" viewBox="-12 -12 24 24"><path d="M-6,-8c3.500,.5 3.500,4-.5,4.500c3,.5 3.500,2.500 1.500,4" fill="none" stroke="#13a10e" stroke-width="1.700"/><path d="M-8.500,9c.5,-3 2,-4.500 4.500,-4.500l1.500,1.500c0,2.500-2.500,3.500-6,3z" fill="#13a10e"/><path d="M-3,3.500l1.500,-2.500 10,-10 1,1-9,11-2,2z" fill="#efefef"/><circle cx="-1.800" cy="2.200" r=".9" fill="#353535"/></svg>
<svg style="left:6px;top:416px" width="24" height="24" viewBox="-12 -12 24 24"><path d="M-9.500,6.500l5,-12.500h4l5,12.500h-3.800l-.9,-2.600h-4.800l-.9,2.600zM-4,1.200h2.800l-1.400,-4.200z" fill="#efefef"/><rect x="6" y="-8.500" width="2" height="17" fill="#13a10e"/></svg>
<svg style="left:6px;top:453px" width="24" height="24" viewBox="-12 -12 24 24"><defs><linearGradient id="tg" x1="0" y1="0" x2="1" y2="1"><stop offset="0" stop-color="#0f8ef0"/><stop offset=".55" stop-color="#5ab8f8"/><stop offset="1" stop-color="#e8f6ff"/></linearGradient></defs><rect x="-8.500" y="-8.500" width="17.500" height="17.500" rx="1.500" fill="none" stroke="#ddd" stroke-width="1.500"/><rect x="-6.300" y="-6.300" width="13" height="13" fill="url(#tg)"/></svg>
<svg style="left:6px;top:490px" width="24" height="24" viewBox="-12 -12 24 24"><defs><radialGradient id="mg"><stop offset="0" stop-color="#2a8de0"/><stop offset="1" stop-color="#0c2348"/></radialGradient></defs><rect x="-8.500" y="-8.500" width="17.500" height="17.500" rx="1" fill="url(#mg)" stroke="#ddd" stroke-width="1.500"/><path d="M0,0c-3,-5-6,-5-8,-3M0,0c5,-3 5,-6 3,-8M0,0c3,5 6,5 8,3M0,0c-5,3-5,6-3,8" fill="none" stroke="#e8f4ff" stroke-width="1.700"/></svg>
<svg style="left:6px;top:527px" width="24" height="24" viewBox="-12 -12 24 24"><path d="M-5.500,-9c-3.300,4.500-3.300,7 0,8 3.300,-1 3.300,-3.500 0,-8z" fill="#2a9df4"/><path d="M-4.500,8.500l.5,-3 7,-7.500 2.500,2.500-7.500,7z" fill="#353535" stroke="#efefef" stroke-width="1.500" stroke-linejoin="round"/><path d="M1.500,-3.500l4.500,-4.500a1.800,1.800 0 0 1 2.600,0l.4,.4a1.800,1.800 0 0 1 0,2.600l-4.500,4.500 1,1-1.500,1.500-5,-5 1.500,-1.500z" fill="#efefef"/></svg>
<svg style="left:6px;top:564px" width="24" height="24" viewBox="-12 -12 24 24"><path d="M-5.500,0c-3.300,4.500-3.300,7 0,8 3.300,-1 3.300,-3.500 0,-8z" fill="#2a9df4"/><path d="M-3,-3.500l7,-5.500 5.500,7-7,5.500z" fill="none" stroke="#efefef" stroke-width="1.500" stroke-linejoin="round"/><path d="M-1.500,-1.500l9,-2 2,2.500-7,5.500z" fill="#efefef"/><path d="M-3.500,-3.500l1,-3.500 7,-3" fill="none" stroke="#aaa" stroke-width="1"/></svg>
<svg style="left:6px;top:601px" width="24" height="24" viewBox="-12 -12 24 24"><path d="M-8.500,7.500v-6.500c1,-5 5,-8 10,-7.500 4,.5 6.500,3 6,6.500-1,-2-3.500,-2.500-4.500,-1-1,2 .5,3.500 2.500,3.500h3.500v5z" fill="#efefef"/></svg>
<svg style="left:6px;top:638px" width="24" height="24" viewBox="-12 -12 24 24"><rect x="-2" y="-.500" width="10.500" height="9.500" rx="1" fill="#efefef"/><path d="M-.500,-1v-1.500l2,-2h4l2,2v1.500z" fill="#efefef"/><rect x="1.500" y="-8" width="4" height="2.800" rx=".8" fill="#efefef"/><g fill="#c0c0c0"><circle cx="-4" cy="-7.500" r="1"/><circle cx="-7.500" cy="-5" r="1"/><circle cx="-4.500" cy="-3.500" r="1"/><circle cx="-7.500" cy="-8.500" r=".8"/><circle cx="-1.500" cy="-9" r=".8"/><circle cx="-7" cy="-1.500" r=".8"/></g></svg>
<svg style="left:6px;top:673px" width="24" height="24" viewBox="-12 -12 24 24"><path d="M-8,3l8,-8 6,6-8,8z" fill="#efefef"/><path d="M-8,3l4,-4 6,6-4,4z" fill="#bbb"/></svg>
</div>
<div class="a" style="left:2px;top:336px;width:34px;height:1px;background:#3a3a3a"></div>
<div class="a" style="left:2px;top:521px;width:34px;height:1px;background:#3a3a3a"></div>
<div class="a" style="left:2px;top:669px;width:34px;height:1px;background:#3a3a3a"></div>
<div class="a" style="left:2px;top:816px;width:34px;height:1px;background:#3a3a3a"></div>
<div class="a" style="left:39px;top:222px;width:1024px;height:26px;background:#343434"></div>
<div class="a" style="left:40.5px;top:226px;width:21.5px;height:22px;background:#2e2e2e;border:1px solid #1c1c1c;border-radius:5px"></div>
<svg style="left:40.5px;top:226.0px" width="22" height="22" viewBox="-11 -11 22 22"><rect x="-5.500" y="-1" width="11" height="8.500" rx="1" fill="#efefef"/><path d="M-3.200,-1v-3a3.200,3.200 0 0 1 6.400,0v3" fill="none" stroke="#efefef" stroke-width="2"/></svg>
<svg style="left:0;top:0" width="1650" height="260" viewBox="0 0 1650 260"><rect x="77.9" y="233.5" width="1.200" height="14.5" fill="#f6f6f6"/><rect x="98.2" y="243.5" width="1.200" height="4.5" fill="#f6f6f6"/><rect x="118.5" y="243.5" width="1.200" height="4.5" fill="#f6f6f6"/><rect x="138.8" y="243.5" width="1.200" height="4.5" fill="#f6f6f6"/><rect x="159.1" y="243.5" width="1.200" height="4.5" fill="#f6f6f6"/><rect x="179.4" y="240.5" width="1.200" height="7.5" fill="#f6f6f6"/><rect x="199.7" y="243.5" width="1.200" height="4.5" fill="#f6f6f6"/><rect x="220.0" y="243.5" width="1.200" height="4.5" fill="#f6f6f6"/><rect x="240.3" y="243.5" width="1.200" height="4.5" fill="#f6f6f6"/><rect x="260.6" y="243.5" width="1.200" height="4.5" fill="#f6f6f6"/><rect x="280.9" y="233.5" width="1.200" height="14.5" fill="#f6f6f6"/><rect x="301.2" y="243.5" width="1.200" height="4.5" fill="#f6f6f6"/><rect x="321.5" y="243.5" width="1.200" height="4.5" fill="#f6f6f6"/><rect x="341.8" y="243.5" width="1.200" height="4.5" fill="#f6f6f6"/><rect x="362.1" y="243.5" width="1.200" height="4.5" fill="#f6f6f6"/><rect x="382.4" y="240.5" width="1.200" height="7.5" fill="#f6f6f6"/><rect x="402.7" y="243.5" width="1.200" height="4.5" fill="#f6f6f6"/><rect x="423.0" y="243.5" width="1.200" height="4.5" fill="#f6f6f6"/><rect x="443.3" y="243.5" width="1.200" height="4.5" fill="#f6f6f6"/><rect x="463.6" y="243.5" width="1.200" height="4.5" fill="#f6f6f6"/><rect x="483.9" y="233.5" width="1.200" height="14.5" fill="#f6f6f6"/><rect x="504.2" y="243.5" width="1.200" height="4.5" fill="#f6f6f6"/><rect x="524.5" y="243.5" width="1.200" height="4.5" fill="#f6f6f6"/><rect x="544.8" y="243.5" width="1.200" height="4.5" fill="#f6f6f6"/><rect x="565.1" y="243.5" width="1.200" height="4.5" fill="#f6f6f6"/><rect x="585.4" y="240.5" width="1.200" height="7.5" fill="#f6f6f6"/><rect x="605.7" y="243.5" width="1.200" height="4.5" fill="#f6f6f6"/><rect x="626.0" y="243.5" width="1.200" height="4.5" fill="#f6f6f6"/><rect x="646.3" y="243.5" width="1.200" height="4.5" fill="#f6f6f6"/><rect x="666.6" y="243.5" width="1.200" height="4.5" fill="#f6f6f6"/><rect x="686.9" y="233.5" width="1.200" height="14.5" fill="#f6f6f6"/><rect x="707.2" y="243.5" width="1.200" height="4.5" fill="#f6f6f6"/><rect x="727.5" y="243.5" width="1.200" height="4.5" fill="#f6f6f6"/><rect x="747.8" y="243.5" width="1.200" height="4.5" fill="#f6f6f6"/><rect x="768.1" y="243.5" width="1.200" height="4.5" fill="#f6f6f6"/><rect x="788.4" y="240.5" width="1.200" height="7.5" fill="#f6f6f6"/><rect x="808.7" y="243.5" width="1.200" height="4.5" fill="#f6f6f6"/><rect x="829.0" y="243.5" width="1.200" height="4.5" fill="#f6f6f6"/><rect x="849.3" y="243.5" width="1.200" height="4.5" fill="#f6f6f6"/><rect x="869.6" y="243.5" width="1.200" height="4.5" fill="#f6f6f6"/><rect x="889.9" y="233.5" width="1.200" height="14.5" fill="#f6f6f6"/><rect x="910.2" y="243.5" width="1.200" height="4.5" fill="#f6f6f6"/><rect x="930.5" y="243.5" width="1.200" height="4.5" fill="#f6f6f6"/><rect x="950.8" y="243.5" width="1.200" height="4.5" fill="#f6f6f6"/><rect x="971.1" y="243.5" width="1.200" height="4.5" fill="#f6f6f6"/><rect x="991.4" y="240.5" width="1.200" height="7.5" fill="#f6f6f6"/><rect x="1011.7" y="243.5" width="1.200" height="4.5" fill="#f6f6f6"/><rect x="1032.0" y="243.5" width="1.200" height="4.5" fill="#f6f6f6"/><rect x="1052.3" y="243.5" width="1.200" height="4.5" fill="#f6f6f6"/><text x="82.0" y="239" font-size="12" fill="#fff" stroke="#fff" stroke-width=".25" font-family='"Liberation Sans",sans-serif'>2000</text><text x="285.0" y="239" font-size="12" fill="#fff" stroke="#fff" stroke-width=".25" font-family='"Liberation Sans",sans-serif'>3000</text><text x="488.0" y="239" font-size="12" fill="#fff" stroke="#fff" stroke-width=".25" font-family='"Liberation Sans",sans-serif'>4000</text><text x="691.0" y="239" font-size="12" fill="#fff" stroke="#fff" stroke-width=".25" font-family='"Liberation Sans",sans-serif'>5000</text><text x="894.0" y="239" font-size="12" fill="#fff" stroke="#fff" stroke-width=".25" font-family='"Liberation Sans",sans-serif'>6000</text><path d="M781,242h10l-5,6z" fill="#efefef"/></svg>
<div class="a" style="left:40px;top:248px;width:22px;height:644px;background:#343434"></div>
<div class="a" style="left:40px;top:378.8px;width:22px;height:269.5px;background:#1b1d1d"></div>
<svg style="left:0;top:0" width="70" height="900" viewBox="0 0 70 900"><rect x="58" y="256.1" width="4" height="1.200" fill="#f6f6f6"/><rect x="54.5" y="276.3" width="7.5" height="1.200" fill="#f6f6f6"/><rect x="58" y="296.6" width="4" height="1.200" fill="#f6f6f6"/><rect x="58" y="316.8" width="4" height="1.200" fill="#f6f6f6"/><rect x="58" y="337.1" width="4" height="1.200" fill="#f6f6f6"/><rect x="58" y="357.3" width="4" height="1.200" fill="#f6f6f6"/><rect x="47.5" y="377.6" width="14.5" height="1.200" fill="#f6f6f6"/><rect x="58" y="397.8" width="4" height="1.200" fill="#f6f6f6"/><rect x="58" y="418.1" width="4" height="1.200" fill="#f6f6f6"/><rect x="58" y="438.3" width="4" height="1.200" fill="#f6f6f6"/><rect x="58" y="458.6" width="4" height="1.200" fill="#f6f6f6"/><rect x="54.5" y="478.8" width="7.5" height="1.200" fill="#f6f6f6"/><rect x="58" y="499.1" width="4" height="1.200" fill="#f6f6f6"/><rect x="58" y="519.4" width="4" height="1.200" fill="#f6f6f6"/><rect x="58" y="539.6" width="4" height="1.200" fill="#f6f6f6"/><rect x="58" y="559.9" width="4" height="1.200" fill="#f6f6f6"/><rect x="47.5" y="580.1" width="14.5" height="1.200" fill="#f6f6f6"/><rect x="58" y="600.4" width="4" height="1.200" fill="#f6f6f6"/><rect x="58" y="620.6" width="4" height="1.200" fill="#f6f6f6"/><rect x="58" y="640.9" width="4" height="1.200" fill="#f6f6f6"/><rect x="58" y="661.1" width="4" height="1.200" fill="#f6f6f6"/><rect x="54.5" y="681.4" width="7.5" height="1.200" fill="#f6f6f6"/><rect x="58" y="701.6" width="4" height="1.200" fill="#f6f6f6"/><rect x="58" y="721.9" width="4" height="1.200" fill="#f6f6f6"/><rect x="58" y="742.1" width="4" height="1.200" fill="#f6f6f6"/><rect x="58" y="762.4" width="4" height="1.200" fill="#f6f6f6"/><rect x="47.5" y="782.6" width="14.5" height="1.200" fill="#f6f6f6"/><rect x="58" y="802.9" width="4" height="1.200" fill="#f6f6f6"/><rect x="58" y="823.1" width="4" height="1.200" fill="#f6f6f6"/><rect x="58" y="843.4" width="4" height="1.200" fill="#f6f6f6"/><rect x="58" y="863.6" width="4" height="1.200" fill="#f6f6f6"/><rect x="54.5" y="883.9" width="7.5" height="1.200" fill="#f6f6f6"/><text transform="translate(53,389) rotate(-90)" font-size="12" fill="#fff" stroke="#fff" stroke-width=".25" font-family='"Liberation Sans",sans-serif'>0</text><text transform="translate(53,611) rotate(-90)" font-size="12" fill="#fff" stroke="#fff" stroke-width=".25" font-family='"Liberation Sans",sans-serif'>1000</text><text transform="translate(53,813) rotate(-90)" font-size="12" fill="#fff" stroke="#fff" stroke-width=".25" font-family='"Liberation Sans",sans-serif'>2000</text><path d="M56,736v10l6,-5z" fill="#efefef"/></svg>
<div class="a" style="left:62px;top:248px;width:1001px;height:644px;background:#d1d1d1"></div>
<div class="a" style="left:62px;top:247.5px;width:1001px;height:1px;background:#e4e4e4"></div>
<svg style="left:62px;top:248px" width="1001" height="644" viewBox="62 248 1001 644"><defs><clipPath id="cc"><rect x="62" y="248" width="1001" height="644"/></clipPath></defs><g clip-path="url(#cc)"><rect x="62" y="379" width="704" height="269" fill="#fff"/><rect x="766" y="379" width="1.500" height="270" fill="#9c9c9c"/><rect x="62" y="648" width="705" height="1.200" fill="#a8a8a8"/><rect x="770" y="379" width="271" height="269" fill="#eedad4"/><rect x="1041" y="379" width="1.500" height="270" fill="#9c9c9c"/><rect x="770" y="648" width="272" height="1.200" fill="#a8a8a8"/><rect x="769" y="379" width="1" height="269" fill="#b9a9a5"/><rect x="1045" y="379" width="18" height="269" fill="#fff"/><rect x="1045" y="379" width="8" height="269" fill="#eedad4"/><rect x="1045" y="648" width="18" height="1.200" fill="#a8a8a8"/><rect x="50" y="379.500" width="676" height="267.500" fill="none" stroke="#a9dcee" stroke-width="1"/><rect x="191.9" y="380.3" width="104.6" height="61.6" rx="13" fill="#ff5a1f" stroke="#7a2a10" stroke-width="1.6"/><g transform="translate(244.20,405.20) scale(0.8817,1)"><text x="0.72" y="0" text-anchor="middle" font-size="14.40" letter-spacing="1.44" fill="#0c0c0c" stroke="#0c0c0c" stroke-width="0.5" font-family='"Liberation Sans",sans-serif'>BE</text></g><g transform="translate(244.20,423.40) scale(0.8817,1)"><text x="0.72" y="0" text-anchor="middle" font-size="14.40" letter-spacing="1.44" fill="#0c0c0c" stroke="#0c0c0c" stroke-width="0.5" font-family='"Liberation Sans",sans-serif'>INSPIRRRD</text></g><rect x="303.6" y="380.3" width="105.8" height="61.6" rx="13" fill="#cc8a6e" stroke="#5a4037" stroke-width="1.6"/><g transform="translate(356.50,405.20) scale(0.8817,1)"><text x="0.72" y="0" text-anchor="middle" font-size="14.40" letter-spacing="1.44" fill="#0c0c0c" stroke="#0c0c0c" stroke-width="0.5" font-family='"Liberation Sans",sans-serif'>BE</text></g><g transform="translate(356.50,423.40) scale(0.8817,1)"><text x="0.72" y="0" text-anchor="middle" font-size="14.40" letter-spacing="1.44" fill="#0c0c0c" stroke="#0c0c0c" stroke-width="0.5" font-family='"Liberation Sans",sans-serif'>INSPIRRRD</text></g><rect x="416.6" y="380.3" width="104.3" height="61.6" rx="13" fill="#4d8dff" stroke="#1a3eb0" stroke-width="1.6"/><g transform="translate(468.75,405.20) scale(0.8817,1)"><text x="0.72" y="0" text-anchor="middle" font-size="14.40" letter-spacing="1.44" fill="#0c0c0c" stroke="#0c0c0c" stroke-width="0.5" font-family='"Liberation Sans",sans-serif'>BE</text></g><g transform="translate(468.75,423.40) scale(0.8817,1)"><text x="0.72" y="0" text-anchor="middle" font-size="14.40" letter-spacing="1.44" fill="#0c0c0c" stroke="#0c0c0c" stroke-width="0.5" font-family='"Liberation Sans",sans-serif'>INSPIRRRD</text></g><rect x="191.9" y="448.4" width="104.6" height="61.6" rx="13" fill="#f20587" stroke="#3fe0b8" stroke-width="1.6"/><g transform="translate(244.20,473.30) scale(0.8817,1)"><text x="0.72" y="0" text-anchor="middle" font-size="14.40" letter-spacing="1.44" fill="#0c0c0c" stroke="#0c0c0c" stroke-width="0.5" font-family='"Liberation Sans",sans-serif'>BE</text></g><g transform="translate(244.20,491.50) scale(0.8817,1)"><text x="0.72" y="0" text-anchor="middle" font-size="14.40" letter-spacing="1.44" fill="#0c0c0c" stroke="#0c0c0c" stroke-width="0.5" font-family='"Liberation Sans",sans-serif'>INSPIRRRD</text></g><rect x="303.6" y="448.4" width="105.8" height="61.6" rx="13" fill="#f542f0" stroke="#8a1aa8" stroke-width="1.6"/><g transform="translate(356.50,473.30) scale(0.8817,1)"><text x="0.72" y="0" text-anchor="middle" font-size="14.40" letter-spacing="1.44" fill="#0c0c0c" stroke="#0c0c0c" stroke-width="0.5" font-family='"Liberation Sans",sans-serif'>BE</text></g><g transform="translate(356.50,491.50) scale(0.8817,1)"><text x="0.72" y="0" text-anchor="middle" font-size="14.40" letter-spacing="1.44" fill="#0c0c0c" stroke="#0c0c0c" stroke-width="0.5" font-family='"Liberation Sans",sans-serif'>INSPIRRRD</text></g><rect x="416.6" y="448.4" width="104.3" height="61.6" rx="13" fill="#0bbf78" stroke="#0a0a0a" stroke-width="1.6"/><g transform="translate(468.75,473.30) scale(0.8817,1)"><text x="0.72" y="0" text-anchor="middle" font-size="14.40" letter-spacing="1.44" fill="#0c0c0c" stroke="#0c0c0c" stroke-width="0.5" font-family='"Liberation Sans",sans-serif'>BE</text></g><g transform="translate(468.75,491.50) scale(0.8817,1)"><text x="0.72" y="0" text-anchor="middle" font-size="14.40" letter-spacing="1.44" fill="#0c0c0c" stroke="#0c0c0c" stroke-width="0.5" font-family='"Liberation Sans",sans-serif'>INSPIRRRD</text></g><rect x="191.9" y="516.3" width="104.6" height="61.6" rx="13" fill="#7390ad" stroke="#6a2ab0" stroke-width="1.6"/><g transform="translate(244.20,541.20) scale(0.8817,1)"><text x="0.72" y="0" text-anchor="middle" font-size="14.40" letter-spacing="1.44" fill="#0c0c0c" stroke="#0c0c0c" stroke-width="0.5" font-family='"Liberation Sans",sans-serif'>BE</text></g><g transform="translate(244.20,559.40) scale(0.8817,1)"><text x="0.72" y="0" text-anchor="middle" font-size="14.40" letter-spacing="1.44" fill="#0c0c0c" stroke="#0c0c0c" stroke-width="0.5" font-family='"Liberation Sans",sans-serif'>INSPIRRRD</text></g><rect x="303.6" y="516.3" width="105.8" height="61.6" rx="13" fill="#d98305" stroke="#5a3a10" stroke-width="1.6"/><g transform="translate(356.50,541.20) scale(0.8817,1)"><text x="0.72" y="0" text-anchor="middle" font-size="14.40" letter-spacing="1.44" fill="#0c0c0c" stroke="#0c0c0c" stroke-width="0.5" font-family='"Liberation Sans",sans-serif'>BE</text></g><g transform="translate(356.50,559.40) scale(0.8817,1)"><text x="0.72" y="0" text-anchor="middle" font-size="14.40" letter-spacing="1.44" fill="#0c0c0c" stroke="#0c0c0c" stroke-width="0.5" font-family='"Liberation Sans",sans-serif'>INSPIRRRD</text></g><rect x="416.6" y="516.3" width="104.3" height="61.6" rx="13" fill="#ff1c24" stroke="#1a10d0" stroke-width="1.6"/><g transform="translate(468.75,541.20) scale(0.8817,1)"><text x="0.72" y="0" text-anchor="middle" font-size="14.40" letter-spacing="1.44" fill="#0c0c0c" stroke="#0c0c0c" stroke-width="0.5" font-family='"Liberation Sans",sans-serif'>BE</text></g><g transform="translate(468.75,559.40) scale(0.8817,1)"><text x="0.72" y="0" text-anchor="middle" font-size="14.40" letter-spacing="1.44" fill="#0c0c0c" stroke="#0c0c0c" stroke-width="0.5" font-family='"Liberation Sans",sans-serif'>INSPIRRRD</text></g><rect x="191.9" y="584.2" width="104.6" height="61.6" rx="13" fill="#94bc98" stroke="#1e4a3c" stroke-width="1.6"/><g transform="translate(244.20,609.10) scale(0.8817,1)"><text x="0.72" y="0" text-anchor="middle" font-size="14.40" letter-spacing="1.44" fill="#0c0c0c" stroke="#0c0c0c" stroke-width="0.5" font-family='"Liberation Sans",sans-serif'>BE</text></g><g transform="translate(244.20,627.30) scale(0.8817,1)"><text x="0.72" y="0" text-anchor="middle" font-size="14.40" letter-spacing="1.44" fill="#0c0c0c" stroke="#0c0c0c" stroke-width="0.5" font-family='"Liberation Sans",sans-serif'>INSPIRRRD</text></g><rect x="303.6" y="584.2" width="105.8" height="61.6" rx="13" fill="#f5a864" stroke="#5de6b0" stroke-width="1.6"/><g transform="translate(356.50,609.10) scale(0.8817,1)"><text x="0.72" y="0" text-anchor="middle" font-size="14.40" letter-spacing="1.44" fill="#0c0c0c" stroke="#0c0c0c" stroke-width="0.5" font-family='"Liberation Sans",sans-serif'>BE</text></g><g transform="translate(356.50,627.30) scale(0.8817,1)"><text x="0.72" y="0" text-anchor="middle" font-size="14.40" letter-spacing="1.44" fill="#0c0c0c" stroke="#0c0c0c" stroke-width="0.5" font-family='"Liberation Sans",sans-serif'>INSPIRRRD</text></g><rect x="416.6" y="584.2" width="104.3" height="61.6" rx="13" fill="#22f0f0" stroke="#103a3a" stroke-width="1.6"/><g transform="translate(468.75,609.10) scale(0.8817,1)"><text x="0.72" y="0" text-anchor="middle" font-size="14.40" letter-spacing="1.44" fill="#0c0c0c" stroke="#0c0c0c" stroke-width="0.5" font-family='"Liberation Sans",sans-serif'>BE</text></g><g transform="translate(468.75,627.30) scale(0.8817,1)"><text x="0.72" y="0" text-anchor="middle" font-size="14.40" letter-spacing="1.44" fill="#0c0c0c" stroke="#0c0c0c" stroke-width="0.5" font-family='"Liberation Sans",sans-serif'>INSPIRRRD</text></g><rect x="30" y="482.5" width="105" height="62" rx="13" fill="#f542f0" stroke="#7a1a9a" stroke-width="1.6"/><g transform="translate(82.50,507.60) scale(0.8817,1)"><text x="0.72" y="0" text-anchor="middle" font-size="14.40" letter-spacing="1.44" fill="#0c0c0c" stroke="#0c0c0c" stroke-width="0.5" font-family='"Liberation Sans",sans-serif'>BE</text></g><g transform="translate(82.50,525.80) scale(0.8817,1)"><text x="0.72" y="0" text-anchor="middle" font-size="14.40" letter-spacing="1.44" fill="#0c0c0c" stroke="#0c0c0c" stroke-width="0.5" font-family='"Liberation Sans",sans-serif'>INSPIRRRD</text></g><rect x="218" y="379" width="3" height="269" fill="#9a9a9a" opacity=".95"/><rect x="218.8" y="379" width="1.300" height="269" fill="#c9c9c9"/><rect x="493" y="379" width="3" height="269" fill="#9a9a9a" opacity=".95"/><rect x="493.8" y="379" width="1.300" height="269" fill="#c9c9c9"/><rect x="221.5" y="360.300" width="15.700" height="17.700" rx="1.500" fill="#505050"/><text x="229.3" y="373.800" text-anchor="middle" font-size="11.500" fill="#fff" font-family='"Liberation Sans",sans-serif'>3</text><rect x="496.5" y="360.300" width="15.700" height="17.700" rx="1.500" fill="#505050"/><text x="504.3" y="373.800" text-anchor="middle" font-size="11.500" fill="#fff" font-family='"Liberation Sans",sans-serif'>4</text><rect x="770" y="360.300" width="15.700" height="17.700" rx="1.500" fill="#505050"/><text x="777.8" y="373.800" text-anchor="middle" font-size="11.500" fill="#fff" font-family='"Liberation Sans",sans-serif'>5</text><rect x="1044.5" y="360.300" width="15.700" height="17.700" rx="1.500" fill="#505050"/><text x="1052.3" y="373.800" text-anchor="middle" font-size="11.500" fill="#fff" font-family='"Liberation Sans",sans-serif'>6</text><g transform="translate(630.4,493.5) rotate(-17)"><rect x="-87.700" y="-51.900" width="175.400" height="103.800" rx="21" fill="#f542f0" stroke="#6f1899" stroke-width="3"/><g transform="translate(0.00,-9.90) scale(0.8817,1)"><text x="1.21" y="0" text-anchor="middle" font-size="24.19" letter-spacing="2.42" fill="#0c0c0c" stroke="#0c0c0c" stroke-width="0.9" font-family='"Liberation Sans",sans-serif'>BE</text></g><g transform="translate(0.00,20.70) scale(0.8817,1)"><text x="1.21" y="0" text-anchor="middle" font-size="24.19" letter-spacing="2.42" fill="#0c0c0c" stroke="#0c0c0c" stroke-width="0.9" font-family='"Liberation Sans",sans-serif'>INSPIRRRD</text></g></g><clipPath id="p5c"><rect x="770" y="379" width="293" height="269"/></clipPath><g clip-path="url(#p5c)"><g fill="none" stroke="#0a0a0a" stroke-width="2.900" stroke-linecap="round"><path d="M770,476L812,493"/><path d="M994,436C1003,415 1030,400 1063,399"/><path d="M795,648C808,636 820,628 833,622M844.800,618.200C852,617.400 860,617.500 866.500,618.700C876,620.500 882,626 886.800,628.400C896,633 904,633.800 911,633.500C921,633 930,631.500 937.700,628.400C948,624 957,617.500 963.200,612.500C974,603.500 982,594.500 988.400,585.100"/><path d="M996,648C1005,620 1035,606 1063,606"/></g><g transform="translate(905,493.5) rotate(-17)"><rect x="-87.700" y="-51.900" width="175.400" height="103.800" rx="21" fill="#f542f0" stroke="#6f1899" stroke-width="3"/><g transform="translate(0.00,-9.90) scale(0.8817,1)"><text x="1.21" y="0" text-anchor="middle" font-size="24.19" letter-spacing="2.42" fill="#0c0c0c" stroke="#0c0c0c" stroke-width="0.9" font-family='"Liberation Sans",sans-serif'>BE</text></g><g transform="translate(0.00,20.70) scale(0.8817,1)"><text x="1.21" y="0" text-anchor="middle" font-size="24.19" letter-spacing="2.42" fill="#0c0c0c" stroke="#0c0c0c" stroke-width="0.9" font-family='"Liberation Sans",sans-serif'>INSPIRRRD</text></g></g><circle cx="797.9" cy="399.3" r="13.100" fill="#fff"/><g transform="translate(797.9,399.3) rotate(-3) scale(.86,1)"><text x="0" y="7.600" text-anchor="middle" font-size="21" fill="#0c0c0c" stroke="#0c0c0c" stroke-width=".7" font-family='"Liberation Sans",sans-serif'>L</text></g><circle cx="826.8" cy="403.3" r="13.100" fill="#fff"/><g transform="translate(826.8,403.3) rotate(2) scale(.86,1)"><text x="0" y="7.600" text-anchor="middle" font-size="21" fill="#0c0c0c" stroke="#0c0c0c" stroke-width=".7" font-family='"Liberation Sans",sans-serif'>I</text></g><circle cx="856" cy="410.5" r="13.100" fill="#fff"/><g transform="translate(856,410.5) rotate(7) scale(.86,1)"><text x="0" y="7.600" text-anchor="middle" font-size="21" fill="#0c0c0c" stroke="#0c0c0c" stroke-width=".7" font-family='"Liberation Sans",sans-serif'>F</text></g><circle cx="884" cy="419.7" r="13.100" fill="#fff"/><g transform="translate(884,419.7) rotate(4) scale(.86,1)"><text x="0" y="7.600" text-anchor="middle" font-size="21" fill="#0c0c0c" stroke="#0c0c0c" stroke-width=".7" font-family='"Liberation Sans",sans-serif'>E</text></g><circle cx="888.7" cy="585.7" r="13.100" fill="#fff"/><g transform="translate(888.7,585.7) rotate(4) scale(.86,1)"><text x="0" y="7.600" text-anchor="middle" font-size="21" fill="#0c0c0c" stroke="#0c0c0c" stroke-width=".7" font-family='"Liberation Sans",sans-serif'>G</text></g><circle cx="912.7" cy="569.2" r="13.100" fill="#fff"/><g transform="translate(912.7,569.2) rotate(8) scale(.86,1)"><text x="0" y="7.600" text-anchor="middle" font-size="21" fill="#0c0c0c" stroke="#0c0c0c" stroke-width=".7" font-family='"Liberation Sans",sans-serif'>O</text></g><circle cx="940.9" cy="561.8" r="13.100" fill="#fff"/><g transform="translate(940.9,561.8) rotate(4) scale(.86,1)"><text x="0" y="7.600" text-anchor="middle" font-size="21" fill="#0c0c0c" stroke="#0c0c0c" stroke-width=".7" font-family='"Liberation Sans",sans-serif'>O</text></g><circle cx="969.3" cy="567.7" r="13.100" fill="#fff"/><g transform="translate(969.3,567.7) rotate(2) scale(.86,1)"><text x="0" y="7.600" text-anchor="middle" font-size="21" fill="#0c0c0c" stroke="#0c0c0c" stroke-width=".7" font-family='"Liberation Sans",sans-serif'>D</text></g><circle cx="803.1" cy="615" r="13.100" fill="#fff"/><g transform="translate(803.1,615) rotate(1) scale(.86,1)"><text x="0" y="7.600" text-anchor="middle" font-size="21" fill="#0c0c0c" stroke="#0c0c0c" stroke-width=".7" font-family='"Liberation Sans",sans-serif'>I</text></g><circle cx="831.8" cy="617.3" r="13.100" fill="#fff"/><g transform="translate(831.8,617.3) rotate(-6) scale(.86,1)"><text x="0" y="7.600" text-anchor="middle" font-size="21" fill="#0c0c0c" stroke="#0c0c0c" stroke-width=".7" font-family='"Liberation Sans",sans-serif'>S</text></g></g></g></svg>
<div class="a" style="left:61.5px;top:248px;width:1px;height:644px;background:#e0e0e0"></div>
<div class="a" style="left:39px;top:892px;width:1024px;height:22px;background:#343434"></div>
<div class="a" style="left:220px;top:898px;width:234px;height:10px;background:#a2a2a2;border-radius:5px"></div>
<div class="a" style="left:1063px;top:222px;width:30px;height:692px;background:#343434"></div>
<div class="a" style="left:1062.6px;top:248px;width:1px;height:644px;background:#e0e0e0"></div>
<div class="a" style="left:1093px;top:222px;width:14px;height:692px;background:#343434"></div>
<div class="a" style="left:1073.5px;top:316px;width:9.5px;height:572px;background:#a2a2a2;border-radius:5px"></div>
<div class="a" style="left:1064px;top:226px;width:29px;height:24px;background:#2e2e2e;border:1px solid #202020;border-radius:5px"></div>
<svg style="left:1067.5px;top:226.5px" width="22" height="22" viewBox="-11 -11 22 22"><rect x="-7" y="-6" width="14" height="9.500" rx="1" fill="#222" stroke="#ddd" stroke-width="1.400"/><path d="M-3.500,6.500h7M0,3.500v3" stroke="#ddd" stroke-width="1.400"/></svg>
<div class="a" style="left:1064px;top:893px;width:29px;height:22px;background:#2e2e2e;border:1px solid #202020;border-radius:5px"></div>
<svg style="left:1067.2px;top:892.5px" width="22" height="22" viewBox="-11 -11 22 22"><circle cx="0" cy="-4.200" r="4" fill="#2e2e2e" stroke="#efefef" stroke-width="1.500"/><circle cx="-4.600" cy="3.800" r="4" fill="#13a10e" stroke="#efefef" stroke-width="1.500"/><circle cx="4.600" cy="3.800" r="4" fill="#ff1aa8" stroke="#efefef" stroke-width="1.500"/></svg>
<div class="a" style="left:1107px;top:231.4px;width:519px;height:675.5px;background:#2f2f2f"></div>
<div class="a" style="left:1107px;top:231.4px;width:519px;height:42px;background:#2a2a2a"></div>
<div class="a" style="left:1432px;top:232px;width:109px;height:41px;background:#333"></div>
<div class="a" style="left:1432px;top:269px;width:109px;height:4px;background:#1c55a8"></div>
<div class="a" style="left:1107px;top:272.5px;width:325px;height:1px;background:#222"></div>
<div class="a" style="left:1541px;top:272.5px;width:85px;height:1px;background:#222"></div>
<svg style="left:1128.0px;top:241.0px" width="22" height="22" viewBox="-11 -11 22 22"><path d="M-8,2.500L-2.500,-3.500V-.500H5.500V9H1.500V5H-2.500V8.500Z" fill="#efefef"/><circle cx="4.600" cy="-3.600" r="5.700" fill="#1e9bf0"/><path d="M4.600,-7v3.600h-3" fill="none" stroke="#fff" stroke-width="1.300"/></svg>
<div class="t" style="left:1151px;top:242.0px;height:18px;line-height:18px;font-size:14px;color:#f0f0f0;font-weight:400;">Undo History</div>
<svg style="left:1238px;top:246px" width="12" height="12" viewBox="-6 -6 12 12"><path d="M-4,-4l8,8M4,-4l-8,8" stroke="#b8b8b8" stroke-width="1.800"/></svg>
<svg style="left:1289.0px;top:241.0px" width="22" height="22" viewBox="-11 -11 22 22"><path d="M-4.800,6.600L8.200,-6.400" stroke="#efefef" stroke-width="1.400"/><circle cx="-4.800" cy="6.600" r="1.900" fill="#fff"/><circle cx="8.200" cy="-6.400" r="2" fill="#fff"/><path d="M-4.800,-2.800c-1.500,4 1,7.500 4,7.300 2.500,-.2 4,-1.200 5.300,-3c-2,1.300-4.500,1.600-6.300,.3-2,-1.300-3,-3-3,-4.600z" fill="#efefef" stroke="#efefef" stroke-width=".6"/><path d="M1,-6l2.500,4.500M.5,-2.500l4.500,-1.500" stroke="#efefef" stroke-width="1.200"/></svg>
<div class="t" style="left:1313px;top:242.0px;height:18px;line-height:18px;font-size:14px;color:#f0f0f0;font-weight:400;">Path Effects</div>
<svg style="left:1392px;top:246px" width="12" height="12" viewBox="-6 -6 12 12"><path d="M-4,-4l8,8M4,-4l-8,8" stroke="#b8b8b8" stroke-width="1.800"/></svg>
<svg style="left:1443.0px;top:241.0px" width="22" height="22" viewBox="-11 -11 22 22"><path d="M3,-2v-1.500l-4.500,-4.500h-5.500v16h10v-2.500" fill="none" stroke="#efefef" stroke-width="2.400" stroke-linejoin="round"/><path d="M-1.500,-8v4.500h4.500" fill="none" stroke="#efefef" stroke-width="1.500"/><path d="M0,2h5v-2.500l4,3.500-4,3.500v-2.500h-5z" fill="#13a10e"/></svg>
<div class="t" style="left:1467px;top:242.0px;height:18px;line-height:18px;font-size:14px;color:#f0f0f0;font-weight:400;">Export</div>
<svg style="left:1512px;top:246px" width="12" height="12" viewBox="-6 -6 12 12"><path d="M-4,-4l8,8M4,-4l-8,8" stroke="#b8b8b8" stroke-width="1.800"/></svg>
<div class="a" style="left:1590px;top:235px;width:34px;height:35px;background:#2f2f2f;border-radius:5px"></div>
<svg style="left:1596.0px;top:241.0px" width="22" height="22" viewBox="-11 -11 22 22"><path d="M-6,-3l6,6 6,-6" fill="none" stroke="#c8c8c8" stroke-width="1.800"/></svg>
<div class="a" style="left:1114px;top:273px;width:505px;height:33px;background:#2a2a2a"></div>
<div class="a" style="left:1121px;top:302px;width:82px;height:4px;background:#1c55a8"></div>
<div class="t" style="left:1129px;top:281.0px;height:18px;line-height:18px;font-size:14px;color:#f0f0f0;font-weight:400;">Single File</div>
<div class="t" style="left:1220px;top:281.0px;height:18px;line-height:18px;font-size:14px;color:#f0f0f0;font-weight:400;">Batch Export</div>
<div class="a" style="left:1114px;top:306.5px;width:139px;height:37.5px;background:#303030;border:1px solid #1e1e1e;text-align:center;line-height:33px;font-size:14px;color:#f0f0f0">Document</div>
<div class="a" style="left:1253px;top:306.5px;width:109px;height:37.5px;background:linear-gradient(#21508f,#1b4178);border:1px solid #173a6e;text-align:center;line-height:33px;font-size:14px;color:#f0f0f0">Page</div>
<div class="a" style="left:1362px;top:306.5px;width:134px;height:37.5px;background:#303030;border:1px solid #1e1e1e;text-align:center;line-height:33px;font-size:14px;color:#f0f0f0">Selection</div>
<div class="a" style="left:1496px;top:306.5px;width:123px;height:37.5px;background:#303030;border:1px solid #1e1e1e;text-align:center;line-height:33px;font-size:14px;color:#f0f0f0">Custom</div>
<div class="a" style="left:1117px;top:348.5px;width:499px;height:160px;background:#2a2a2a;border:1px solid #1f1f1f;overflow:hidden"></div>
<div class="a" style="left:1125px;top:355px;width:87px;height:103px;background:#1a52a2"></div>
<svg style="left:1117px;top:349px" width="499" height="159" viewBox="1117 349 499 159"><defs><pattern id="chk" width="12.600" height="12.600" patternUnits="userSpaceOnUse"><rect width="12.600" height="12.600" fill="#fff"/><rect width="6.300" height="6.300" fill="#e6e6e6"/><rect x="6.300" y="6.300" width="6.300" height="6.300" fill="#e6e6e6"/></pattern></defs><clipPath id="tk00"><rect x="1131" y="358.5" width="76" height="76"/></clipPath><g clip-path="url(#tk00)"><rect x="1131" y="358.5" width="76" height="76" fill="url(#chk)"/></g><g clip-path="url(#tk00)"><rect x="1134" y="361.5" width="28" height="17" rx="4" fill="#fff" stroke="#777" stroke-width=".6"/><g transform="rotate(0 1185.0 372.0)"><rect x="1170" y="363.5" width="30" height="17" rx="3" fill="#f542f0" stroke="#7a1a9a" stroke-width=".5"/><text x="1185.0" y="371.0" text-anchor="middle" font-size="4" font-weight="700" fill="#222" font-family='"Liberation Sans",sans-serif'>BE</text><text x="1185.0" y="376.0" text-anchor="middle" font-size="4" font-weight="700" fill="#222" font-family='"Liberation Sans",sans-serif'>INSPIRRRD</text></g><g transform="rotate(0 1148.5 393.0)"><rect x="1134" y="384.5" width="29" height="17" rx="3" fill="#f542f0" stroke="#7a1a9a" stroke-width=".5"/><text x="1148.5" y="392.0" text-anchor="middle" font-size="4" font-weight="700" fill="#222" font-family='"Liberation Sans",sans-serif'>BE</text><text x="1148.5" y="397.0" text-anchor="middle" font-size="4" font-weight="700" fill="#222" font-family='"Liberation Sans",sans-serif'>INSPIRRRD</text></g><g transform="rotate(0 1150.0 434.0)"><rect x="1132" y="425.5" width="36" height="17" rx="3" fill="#f542f0" stroke="#7a1a9a" stroke-width=".5"/></g><text x="1174" y="431.5" font-size="7" font-weight="700" fill="#222" font-family='"Liberation Sans",sans-serif'>LIFE</text><text x="1188" y="385.5" text-anchor="middle" font-size="3.500" font-weight="700" fill="#444" font-family='"Liberation Sans",sans-serif'>LIFE</text><text x="1188" y="389.5" text-anchor="middle" font-size="3.500" font-weight="700" fill="#444" font-family='"Liberation Sans",sans-serif'>IS</text><text x="1188" y="394.5" text-anchor="middle" font-size="3.500" font-weight="700" fill="#444" font-family='"Liberation Sans",sans-serif'>GOOD</text><text x="1176" y="401.5" text-anchor="middle" font-size="3.500" font-weight="700" fill="#444" font-family='"Liberation Sans",sans-serif'>BE</text><text x="1176" y="406.0" text-anchor="middle" font-size="3.500" font-weight="700" fill="#444" font-family='"Liberation Sans",sans-serif'>INSPIRRRD</text><text x="1176" y="410.0" text-anchor="middle" font-size="3.500" font-weight="700" fill="#444" font-family='"Liberation Sans",sans-serif'>BE</text><text x="1176" y="414.5" text-anchor="middle" font-size="3.500" font-weight="700" fill="#444" font-family='"Liberation Sans",sans-serif'>INSPIRRRD</text></g><clipPath id="tk10"><rect x="1229.5" y="358.5" width="76" height="76"/></clipPath><g clip-path="url(#tk10)"><rect x="1229.5" y="358.5" width="76" height="76" fill="url(#chk)"/><g transform="translate(1229.5,358.5) scale(0.28044) translate(53,-378.500)"><rect x="30" y="482.5" width="105" height="62" rx="13" fill="#f542f0" stroke="#7a1a9a" stroke-width="1.6"/><g transform="translate(82.50,507.60) scale(0.8817,1)"><text x="0.72" y="0" text-anchor="middle" font-size="14.40" letter-spacing="1.44" fill="#0c0c0c" stroke="#0c0c0c" stroke-width="0.5" font-family='"Liberation Sans",sans-serif'>BE</text></g><g transform="translate(82.50,525.80) scale(0.8817,1)"><text x="0.72" y="0" text-anchor="middle" font-size="14.40" letter-spacing="1.44" fill="#0c0c0c" stroke="#0c0c0c" stroke-width="0.5" font-family='"Liberation Sans",sans-serif'>INSPIRRRD</text></g><rect x="191.9" y="380.3" width="104.6" height="61.6" rx="13" fill="#ff5a1f" stroke="#7a2a10" stroke-width="1.6"/><g transform="translate(244.20,405.20) scale(0.8817,1)"><text x="0.72" y="0" text-anchor="middle" font-size="14.40" letter-spacing="1.44" fill="#0c0c0c" stroke="#0c0c0c" stroke-width="0.5" font-family='"Liberation Sans",sans-serif'>BE</text></g><g transform="translate(244.20,423.40) scale(0.8817,1)"><text x="0.72" y="0" text-anchor="middle" font-size="14.40" letter-spacing="1.44" fill="#0c0c0c" stroke="#0c0c0c" stroke-width="0.5" font-family='"Liberation Sans",sans-serif'>INSPIRRRD</text></g><rect x="191.9" y="448.4" width="104.6" height="61.6" rx="13" fill="#f20587" stroke="#3fe0b8" stroke-width="1.6"/><g transform="translate(244.20,473.30) scale(0.8817,1)"><text x="0.72" y="0" text-anchor="middle" font-size="14.40" letter-spacing="1.44" fill="#0c0c0c" stroke="#0c0c0c" stroke-width="0.5" font-family='"Liberation Sans",sans-serif'>BE</text></g><g transform="translate(244.20,491.50) scale(0.8817,1)"><text x="0.72" y="0" text-anchor="middle" font-size="14.40" letter-spacing="1.44" fill="#0c0c0c" stroke="#0c0c0c" stroke-width="0.5" font-family='"Liberation Sans",sans-serif'>INSPIRRRD</text></g><rect x="191.9" y="516.3" width="104.6" height="61.6" rx="13" fill="#7390ad" stroke="#6a2ab0" stroke-width="1.6"/><g transform="translate(244.20,541.20) scale(0.8817,1)"><text x="0.72" y="0" text-anchor="middle" font-size="14.40" letter-spacing="1.44" fill="#0c0c0c" stroke="#0c0c0c" stroke-width="0.5" font-family='"Liberation Sans",sans-serif'>BE</text></g><g transform="translate(244.20,559.40) scale(0.8817,1)"><text x="0.72" y="0" text-anchor="middle" font-size="14.40" letter-spacing="1.44" fill="#0c0c0c" stroke="#0c0c0c" stroke-width="0.5" font-family='"Liberation Sans",sans-serif'>INSPIRRRD</text></g><rect x="191.9" y="584.2" width="104.6" height="61.6" rx="13" fill="#94bc98" stroke="#1e4a3c" stroke-width="1.6"/><g transform="translate(244.20,609.10) scale(0.8817,1)"><text x="0.72" y="0" text-anchor="middle" font-size="14.40" letter-spacing="1.44" fill="#0c0c0c" stroke="#0c0c0c" stroke-width="0.5" font-family='"Liberation Sans",sans-serif'>BE</text></g><g transform="translate(244.20,627.30) scale(0.8817,1)"><text x="0.72" y="0" text-anchor="middle" font-size="14.40" letter-spacing="1.44" fill="#0c0c0c" stroke="#0c0c0c" stroke-width="0.5" font-family='"Liberation Sans",sans-serif'>INSPIRRRD</text></g></g></g><clipPath id="tk20"><rect x="1328" y="358.5" width="76" height="76"/></clipPath><g clip-path="url(#tk20)"><rect x="1328" y="358.5" width="76" height="76" fill="url(#chk)"/><g transform="translate(1328,358.5) scale(0.28044) translate(-216,-378.500)"><rect x="191.9" y="380.3" width="104.6" height="61.6" rx="13" fill="#ff5a1f" stroke="#7a2a10" stroke-width="1.6"/><g transform="translate(244.20,405.20) scale(0.8817,1)"><text x="0.72" y="0" text-anchor="middle" font-size="14.40" letter-spacing="1.44" fill="#0c0c0c" stroke="#0c0c0c" stroke-width="0.5" font-family='"Liberation Sans",sans-serif'>BE</text></g><g transform="translate(244.20,423.40) scale(0.8817,1)"><text x="0.72" y="0" text-anchor="middle" font-size="14.40" letter-spacing="1.44" fill="#0c0c0c" stroke="#0c0c0c" stroke-width="0.5" font-family='"Liberation Sans",sans-serif'>INSPIRRRD</text></g><rect x="303.6" y="380.3" width="105.8" height="61.6" rx="13" fill="#cc8a6e" stroke="#5a4037" stroke-width="1.6"/><g transform="translate(356.50,405.20) scale(0.8817,1)"><text x="0.72" y="0" text-anchor="middle" font-size="14.40" letter-spacing="1.44" fill="#0c0c0c" stroke="#0c0c0c" stroke-width="0.5" font-family='"Liberation Sans",sans-serif'>BE</text></g><g transform="translate(356.50,423.40) scale(0.8817,1)"><text x="0.72" y="0" text-anchor="middle" font-size="14.40" letter-spacing="1.44" fill="#0c0c0c" stroke="#0c0c0c" stroke-width="0.5" font-family='"Liberation Sans",sans-serif'>INSPIRRRD</text></g><rect x="416.6" y="380.3" width="104.3" height="61.6" rx="13" fill="#4d8dff" stroke="#1a3eb0" stroke-width="1.6"/><g transform="translate(468.75,405.20) scale(0.8817,1)"><text x="0.72" y="0" text-anchor="middle" font-size="14.40" letter-spacing="1.44" fill="#0c0c0c" stroke="#0c0c0c" stroke-width="0.5" font-family='"Liberation Sans",sans-serif'>BE</text></g><g transform="translate(468.75,423.40) scale(0.8817,1)"><text x="0.72" y="0" text-anchor="middle" font-size="14.40" letter-spacing="1.44" fill="#0c0c0c" stroke="#0c0c0c" stroke-width="0.5" font-family='"Liberation Sans",sans-serif'>INSPIRRRD</text></g><rect x="191.9" y="448.4" width="104.6" height="61.6" rx="13" fill="#f20587" stroke="#3fe0b8" stroke-width="1.6"/><g transform="translate(244.20,473.30) scale(0.8817,1)"><text x="0.72" y="0" text-anchor="middle" font-size="14.40" letter-spacing="1.44" fill="#0c0c0c" stroke="#0c0c0c" stroke-width="0.5" font-family='"Liberation Sans",sans-serif'>BE</text></g><g transform="translate(244.20,491.50) scale(0.8817,1)"><text x="0.72" y="0" text-anchor="middle" font-size="14.40" letter-spacing="1.44" fill="#0c0c0c" stroke="#0c0c0c" stroke-width="0.5" font-family='"Liberation Sans",sans-serif'>INSPIRRRD</text></g><rect x="303.6" y="448.4" width="105.8" height="61.6" rx="13" fill="#f542f0" stroke="#8a1aa8" stroke-width="1.6"/><g transform="translate(356.50,473.30) scale(0.8817,1)"><text x="0.72" y="0" text-anchor="middle" font-size="14.40" letter-spacing="1.44" fill="#0c0c0c" stroke="#0c0c0c" stroke-width="0.5" font-family='"Liberation Sans",sans-serif'>BE</text></g><g transform="translate(356.50,491.50) scale(0.8817,1)"><text x="0.72" y="0" text-anchor="middle" font-size="14.40" letter-spacing="1.44" fill="#0c0c0c" stroke="#0c0c0c" stroke-width="0.5" font-family='"Liberation Sans",sans-serif'>INSPIRRRD</text></g><rect x="416.6" y="448.4" width="104.3" height="61.6" rx="13" fill="#0bbf78" stroke="#0a0a0a" stroke-width="1.6"/><g transform="translate(468.75,473.30) scale(0.8817,1)"><text x="0.72" y="0" text-anchor="middle" font-size="14.40" letter-spacing="1.44" fill="#0c0c0c" stroke="#0c0c0c" stroke-width="0.5" font-family='"Liberation Sans",sans-serif'>BE</text></g><g transform="translate(468.75,491.50) scale(0.8817,1)"><text x="0.72" y="0" text-anchor="middle" font-size="14.40" letter-spacing="1.44" fill="#0c0c0c" stroke="#0c0c0c" stroke-width="0.5" font-family='"Liberation Sans",sans-serif'>INSPIRRRD</text></g><rect x="191.9" y="516.3" width="104.6" height="61.6" rx="13" fill="#7390ad" stroke="#6a2ab0" stroke-width="1.6"/><g transform="translate(244.20,541.20) scale(0.8817,1)"><text x="0.72" y="0" text-anchor="middle" font-size="14.40" letter-spacing="1.44" fill="#0c0c0c" stroke="#0c0c0c" stroke-width="0.5" font-family='"Liberation Sans",sans-serif'>BE</text></g><g transform="translate(244.20,559.40) scale(0.8817,1)"><text x="0.72" y="0" text-anchor="middle" font-size="14.40" letter-spacing="1.44" fill="#0c0c0c" stroke="#0c0c0c" stroke-width="0.5" font-family='"Liberation Sans",sans-serif'>INSPIRRRD</text></g><rect x="303.6" y="516.3" width="105.8" height="61.6" rx="13" fill="#d98305" stroke="#5a3a10" stroke-width="1.6"/><g transform="translate(356.50,541.20) scale(0.8817,1)"><text x="0.72" y="0" text-anchor="middle" font-size="14.40" letter-spacing="1.44" fill="#0c0c0c" stroke="#0c0c0c" stroke-width="0.5" font-family='"Liberation Sans",sans-serif'>BE</text></g><g transform="translate(356.50,559.40) scale(0.8817,1)"><text x="0.72" y="0" text-anchor="middle" font-size="14.40" letter-spacing="1.44" fill="#0c0c0c" stroke="#0c0c0c" stroke-width="0.5" font-family='"Liberation Sans",sans-serif'>INSPIRRRD</text></g><rect x="416.6" y="516.3" width="104.3" height="61.6" rx="13" fill="#ff1c24" stroke="#1a10d0" stroke-width="1.6"/><g transform="translate(468.75,541.20) scale(0.8817,1)"><text x="0.72" y="0" text-anchor="middle" font-size="14.40" letter-spacing="1.44" fill="#0c0c0c" stroke="#0c0c0c" stroke-width="0.5" font-family='"Liberation Sans",sans-serif'>BE</text></g><g transform="translate(468.75,559.40) scale(0.8817,1)"><text x="0.72" y="0" text-anchor="middle" font-size="14.40" letter-spacing="1.44" fill="#0c0c0c" stroke="#0c0c0c" stroke-width="0.5" font-family='"Liberation Sans",sans-serif'>INSPIRRRD</text></g><rect x="191.9" y="584.2" width="104.6" height="61.6" rx="13" fill="#94bc98" stroke="#1e4a3c" stroke-width="1.6"/><g transform="translate(244.20,609.10) scale(0.8817,1)"><text x="0.72" y="0" text-anchor="middle" font-size="14.40" letter-spacing="1.44" fill="#0c0c0c" stroke="#0c0c0c" stroke-width="0.5" font-family='"Liberation Sans",sans-serif'>BE</text></g><g transform="translate(244.20,627.30) scale(0.8817,1)"><text x="0.72" y="0" text-anchor="middle" font-size="14.40" letter-spacing="1.44" fill="#0c0c0c" stroke="#0c0c0c" stroke-width="0.5" font-family='"Liberation Sans",sans-serif'>INSPIRRRD</text></g><rect x="303.6" y="584.2" width="105.8" height="61.6" rx="13" fill="#f5a864" stroke="#5de6b0" stroke-width="1.6"/><g transform="translate(356.50,609.10) scale(0.8817,1)"><text x="0.72" y="0" text-anchor="middle" font-size="14.40" letter-spacing="1.44" fill="#0c0c0c" stroke="#0c0c0c" stroke-width="0.5" font-family='"Liberation Sans",sans-serif'>BE</text></g><g transform="translate(356.50,627.30) scale(0.8817,1)"><text x="0.72" y="0" text-anchor="middle" font-size="14.40" letter-spacing="1.44" fill="#0c0c0c" stroke="#0c0c0c" stroke-width="0.5" font-family='"Liberation Sans",sans-serif'>INSPIRRRD</text></g><rect x="416.6" y="584.2" width="104.3" height="61.6" rx="13" fill="#22f0f0" stroke="#103a3a" stroke-width="1.6"/><g transform="translate(468.75,609.10) scale(0.8817,1)"><text x="0.72" y="0" text-anchor="middle" font-size="14.40" letter-spacing="1.44" fill="#0c0c0c" stroke="#0c0c0c" stroke-width="0.5" font-family='"Liberation Sans",sans-serif'>BE</text></g><g transform="translate(468.75,627.30) scale(0.8817,1)"><text x="0.72" y="0" text-anchor="middle" font-size="14.40" letter-spacing="1.44" fill="#0c0c0c" stroke="#0c0c0c" stroke-width="0.5" font-family='"Liberation Sans",sans-serif'>INSPIRRRD</text></g></g></g><clipPath id="tk30"><rect x="1425.5" y="358.5" width="76" height="76"/></clipPath><g clip-path="url(#tk30)"><rect x="1425.5" y="358.5" width="76" height="76" fill="url(#chk)"/><g transform="translate(1425.5,358.5) scale(0.28044) translate(-497,-378.500)"><g transform="translate(8,0)"><rect x="416.6" y="380.3" width="104.3" height="61.6" rx="13" fill="#4d8dff" stroke="#1a3eb0" stroke-width="1.6"/><g transform="translate(468.75,405.20) scale(0.8817,1)"><text x="0.72" y="0" text-anchor="middle" font-size="14.40" letter-spacing="1.44" fill="#0c0c0c" stroke="#0c0c0c" stroke-width="0.5" font-family='"Liberation Sans",sans-serif'>BE</text></g><g transform="translate(468.75,423.40) scale(0.8817,1)"><text x="0.72" y="0" text-anchor="middle" font-size="14.40" letter-spacing="1.44" fill="#0c0c0c" stroke="#0c0c0c" stroke-width="0.5" font-family='"Liberation Sans",sans-serif'>INSPIRRRD</text></g><rect x="416.6" y="448.4" width="104.3" height="61.6" rx="13" fill="#0bbf78" stroke="#0a0a0a" stroke-width="1.6"/><g transform="translate(468.75,473.30) scale(0.8817,1)"><text x="0.72" y="0" text-anchor="middle" font-size="14.40" letter-spacing="1.44" fill="#0c0c0c" stroke="#0c0c0c" stroke-width="0.5" font-family='"Liberation Sans",sans-serif'>BE</text></g><g transform="translate(468.75,491.50) scale(0.8817,1)"><text x="0.72" y="0" text-anchor="middle" font-size="14.40" letter-spacing="1.44" fill="#0c0c0c" stroke="#0c0c0c" stroke-width="0.5" font-family='"Liberation Sans",sans-serif'>INSPIRRRD</text></g><rect x="416.6" y="516.3" width="104.3" height="61.6" rx="13" fill="#ff1c24" stroke="#1a10d0" stroke-width="1.6"/><g transform="translate(468.75,541.20) scale(0.8817,1)"><text x="0.72" y="0" text-anchor="middle" font-size="14.40" letter-spacing="1.44" fill="#0c0c0c" stroke="#0c0c0c" stroke-width="0.5" font-family='"Liberation Sans",sans-serif'>BE</text></g><g transform="translate(468.75,559.40) scale(0.8817,1)"><text x="0.72" y="0" text-anchor="middle" font-size="14.40" letter-spacing="1.44" fill="#0c0c0c" stroke="#0c0c0c" stroke-width="0.5" font-family='"Liberation Sans",sans-serif'>INSPIRRRD</text></g><rect x="416.6" y="584.2" width="104.3" height="61.6" rx="13" fill="#22f0f0" stroke="#103a3a" stroke-width="1.6"/><g transform="translate(468.75,609.10) scale(0.8817,1)"><text x="0.72" y="0" text-anchor="middle" font-size="14.40" letter-spacing="1.44" fill="#0c0c0c" stroke="#0c0c0c" stroke-width="0.5" font-family='"Liberation Sans",sans-serif'>BE</text></g><g transform="translate(468.75,627.30) scale(0.8817,1)"><text x="0.72" y="0" text-anchor="middle" font-size="14.40" letter-spacing="1.44" fill="#0c0c0c" stroke="#0c0c0c" stroke-width="0.5" font-family='"Liberation Sans",sans-serif'>INSPIRRRD</text></g></g><g transform="translate(632,493.5) rotate(-17)"><rect x="-87.700" y="-51.900" width="175.400" height="103.800" rx="21" fill="#f542f0" stroke="#6f1899" stroke-width="3"/><g transform="translate(0.00,-9.90) scale(0.8817,1)"><text x="1.21" y="0" text-anchor="middle" font-size="24.19" letter-spacing="2.42" fill="#0c0c0c" stroke="#0c0c0c" stroke-width="0.9" font-family='"Liberation Sans",sans-serif'>BE</text></g><g transform="translate(0.00,20.70) scale(0.8817,1)"><text x="1.21" y="0" text-anchor="middle" font-size="24.19" letter-spacing="2.42" fill="#0c0c0c" stroke="#0c0c0c" stroke-width="0.9" font-family='"Liberation Sans",sans-serif'>INSPIRRRD</text></g></g></g></g><clipPath id="tk40"><rect x="1523" y="358.5" width="76" height="76"/></clipPath><g clip-path="url(#tk40)"><rect x="1523" y="358.5" width="76" height="76" fill="#eedad4"/><g transform="translate(1523,358.5) scale(0.28044) translate(-770,-378.500)"><g fill="none" stroke="#0a0a0a" stroke-width="2.900" stroke-linecap="round"><path d="M770,476L812,493"/><path d="M994,436C1003,415 1030,400 1063,399"/><path d="M795,648C808,636 820,628 833,622M844.800,618.200C852,617.400 860,617.500 866.500,618.700C876,620.500 882,626 886.800,628.400C896,633 904,633.800 911,633.500C921,633 930,631.500 937.700,628.400C948,624 957,617.500 963.200,612.500C974,603.500 982,594.500 988.400,585.100"/><path d="M996,648C1005,620 1035,606 1063,606"/></g><g transform="translate(905,493.5) rotate(-17)"><rect x="-87.700" y="-51.900" width="175.400" height="103.800" rx="21" fill="#f542f0" stroke="#6f1899" stroke-width="3"/><g transform="translate(0.00,-9.90) scale(0.8817,1)"><text x="1.21" y="0" text-anchor="middle" font-size="24.19" letter-spacing="2.42" fill="#0c0c0c" stroke="#0c0c0c" stroke-width="0.9" font-family='"Liberation Sans",sans-serif'>BE</text></g><g transform="translate(0.00,20.70) scale(0.8817,1)"><text x="1.21" y="0" text-anchor="middle" font-size="24.19" letter-spacing="2.42" fill="#0c0c0c" stroke="#0c0c0c" stroke-width="0.9" font-family='"Liberation Sans",sans-serif'>INSPIRRRD</text></g></g><circle cx="797.9" cy="399.3" r="13.100" fill="#fff"/><g transform="translate(797.9,399.3) rotate(-3) scale(.86,1)"><text x="0" y="7.600" text-anchor="middle" font-size="21" fill="#0c0c0c" stroke="#0c0c0c" stroke-width=".7" font-family='"Liberation Sans",sans-serif'>L</text></g><circle cx="826.8" cy="403.3" r="13.100" fill="#fff"/><g transform="translate(826.8,403.3) rotate(2) scale(.86,1)"><text x="0" y="7.600" text-anchor="middle" font-size="21" fill="#0c0c0c" stroke="#0c0c0c" stroke-width=".7" font-family='"Liberation Sans",sans-serif'>I</text></g><circle cx="856" cy="410.5" r="13.100" fill="#fff"/><g transform="translate(856,410.5) rotate(7) scale(.86,1)"><text x="0" y="7.600" text-anchor="middle" font-size="21" fill="#0c0c0c" stroke="#0c0c0c" stroke-width=".7" font-family='"Liberation Sans",sans-serif'>F</text></g><circle cx="884" cy="419.7" r="13.100" fill="#fff"/><g transform="translate(884,419.7) rotate(4) scale(.86,1)"><text x="0" y="7.600" text-anchor="middle" font-size="21" fill="#0c0c0c" stroke="#0c0c0c" stroke-width=".7" font-family='"Liberation Sans",sans-serif'>E</text></g><circle cx="888.7" cy="585.7" r="13.100" fill="#fff"/><g transform="translate(888.7,585.7) rotate(4) scale(.86,1)"><text x="0" y="7.600" text-anchor="middle" font-size="21" fill="#0c0c0c" stroke="#0c0c0c" stroke-width=".7" font-family='"Liberation Sans",sans-serif'>G</text></g><circle cx="912.7" cy="569.2" r="13.100" fill="#fff"/><g transform="translate(912.7,569.2) rotate(8) scale(.86,1)"><text x="0" y="7.600" text-anchor="middle" font-size="21" fill="#0c0c0c" stroke="#0c0c0c" stroke-width=".7" font-family='"Liberation Sans",sans-serif'>O</text></g><circle cx="940.9" cy="561.8" r="13.100" fill="#fff"/><g transform="translate(940.9,561.8) rotate(4) scale(.86,1)"><text x="0" y="7.600" text-anchor="middle" font-size="21" fill="#0c0c0c" stroke="#0c0c0c" stroke-width=".7" font-family='"Liberation Sans",sans-serif'>O</text></g><circle cx="969.3" cy="567.7" r="13.100" fill="#fff"/><g transform="translate(969.3,567.7) rotate(2) scale(.86,1)"><text x="0" y="7.600" text-anchor="middle" font-size="21" fill="#0c0c0c" stroke="#0c0c0c" stroke-width=".7" font-family='"Liberation Sans",sans-serif'>D</text></g><circle cx="803.1" cy="615" r="13.100" fill="#fff"/><g transform="translate(803.1,615) rotate(1) scale(.86,1)"><text x="0" y="7.600" text-anchor="middle" font-size="21" fill="#0c0c0c" stroke="#0c0c0c" stroke-width=".7" font-family='"Liberation Sans",sans-serif'>I</text></g><circle cx="831.8" cy="617.3" r="13.100" fill="#fff"/><g transform="translate(831.8,617.3) rotate(-6) scale(.86,1)"><text x="0" y="7.600" text-anchor="middle" font-size="21" fill="#0c0c0c" stroke="#0c0c0c" stroke-width=".7" font-family='"Liberation Sans",sans-serif'>S</text></g></g></g><clipPath id="tk01"><rect x="1131" y="469" width="76" height="39"/></clipPath><g clip-path="url(#tk01)"><rect x="1131" y="469" width="76" height="76" fill="url(#chk)"/></g><g clip-path="url(#tk01)"><rect x="1135" y="469" width="1" height="40" fill="#f0b0a0"/><path d="M1133,476l6,-1M1171,484l5,2M1193,491l14,-1" fill="none" stroke="#444" stroke-width=".800"/><text transform="translate(1142,477) rotate(5)" font-size="4.500" font-weight="700" fill="#333" font-family='"Liberation Sans",sans-serif'>L</text><text transform="translate(1149,478) rotate(12)" font-size="4.500" font-weight="700" fill="#333" font-family='"Liberation Sans",sans-serif'>I</text><text transform="translate(1156,480) rotate(18)" font-size="4.500" font-weight="700" fill="#333" font-family='"Liberation Sans",sans-serif'>F</text><text transform="translate(1163,483) rotate(22)" font-size="4.500" font-weight="700" fill="#333" font-family='"Liberation Sans",sans-serif'>E</text><g transform="translate(1171,503) rotate(-17) scale(0.2748)"><rect x="-87.700" y="-51.900" width="175.400" height="103.800" rx="21" fill="#f542f0" stroke="#6f1899" stroke-width="3"/><g transform="translate(0.00,-9.90) scale(0.8817,1)"><text x="1.20" y="0" text-anchor="middle" font-size="24.20" letter-spacing="2.40" fill="#0c0c0c" stroke="#0c0c0c" stroke-width="0.9" font-family='"Liberation Sans",sans-serif'>BE</text></g><g transform="translate(0.00,20.70) scale(0.8817,1)"><text x="1.20" y="0" text-anchor="middle" font-size="24.20" letter-spacing="2.40" fill="#0c0c0c" stroke="#0c0c0c" stroke-width="0.9" font-family='"Liberation Sans",sans-serif'>INSPIRRRD</text></g></g></g><clipPath id="tk11"><rect x="1229.5" y="469" width="76" height="39"/></clipPath><g clip-path="url(#tk11)"><rect x="1229.5" y="469" width="76" height="76" fill="url(#chk)"/></g><path d="M1231.5,489c6,-3 10,-8 13,-13" fill="none" stroke="#444" stroke-width=".900"/><clipPath id="tk21"><rect x="1328" y="469" width="76" height="39"/></clipPath><g clip-path="url(#tk21)"><rect x="1328" y="469" width="76" height="76" fill="url(#chk)"/></g><clipPath id="tk31"><rect x="1425.5" y="469" width="76" height="39"/></clipPath><g clip-path="url(#tk31)"><rect x="1425.5" y="469" width="76" height="76" fill="#eedad4"/><g transform="translate(1425.5,469) scale(0.28044) translate(53,-378.500)"><rect x="30" y="482.5" width="105" height="62" rx="13" fill="#f542f0" stroke="#7a1a9a" stroke-width="1.6"/><g transform="translate(82.50,507.60) scale(0.8817,1)"><text x="0.72" y="0" text-anchor="middle" font-size="14.40" letter-spacing="1.44" fill="#0c0c0c" stroke="#0c0c0c" stroke-width="0.5" font-family='"Liberation Sans",sans-serif'>BE</text></g><g transform="translate(82.50,525.80) scale(0.8817,1)"><text x="0.72" y="0" text-anchor="middle" font-size="14.40" letter-spacing="1.44" fill="#0c0c0c" stroke="#0c0c0c" stroke-width="0.5" font-family='"Liberation Sans",sans-serif'>INSPIRRRD</text></g><rect x="191.9" y="380.3" width="104.6" height="61.6" rx="13" fill="#ff5a1f" stroke="#7a2a10" stroke-width="1.6"/><g transform="translate(244.20,405.20) scale(0.8817,1)"><text x="0.72" y="0" text-anchor="middle" font-size="14.40" letter-spacing="1.44" fill="#0c0c0c" stroke="#0c0c0c" stroke-width="0.5" font-family='"Liberation Sans",sans-serif'>BE</text></g><g transform="translate(244.20,423.40) scale(0.8817,1)"><text x="0.72" y="0" text-anchor="middle" font-size="14.40" letter-spacing="1.44" fill="#0c0c0c" stroke="#0c0c0c" stroke-width="0.5" font-family='"Liberation Sans",sans-serif'>INSPIRRRD</text></g><rect x="191.9" y="448.4" width="104.6" height="61.6" rx="13" fill="#f20587" stroke="#3fe0b8" stroke-width="1.6"/><g transform="translate(244.20,473.30) scale(0.8817,1)"><text x="0.72" y="0" text-anchor="middle" font-size="14.40" letter-spacing="1.44" fill="#0c0c0c" stroke="#0c0c0c" stroke-width="0.5" font-family='"Liberation Sans",sans-serif'>BE</text></g><g transform="translate(244.20,491.50) scale(0.8817,1)"><text x="0.72" y="0" text-anchor="middle" font-size="14.40" letter-spacing="1.44" fill="#0c0c0c" stroke="#0c0c0c" stroke-width="0.5" font-family='"Liberation Sans",sans-serif'>INSPIRRRD</text></g><rect x="191.9" y="516.3" width="104.6" height="61.6" rx="13" fill="#7390ad" stroke="#6a2ab0" stroke-width="1.6"/><g transform="translate(244.20,541.20) scale(0.8817,1)"><text x="0.72" y="0" text-anchor="middle" font-size="14.40" letter-spacing="1.44" fill="#0c0c0c" stroke="#0c0c0c" stroke-width="0.5" font-family='"Liberation Sans",sans-serif'>BE</text></g><g transform="translate(244.20,559.40) scale(0.8817,1)"><text x="0.72" y="0" text-anchor="middle" font-size="14.40" letter-spacing="1.44" fill="#0c0c0c" stroke="#0c0c0c" stroke-width="0.5" font-family='"Liberation Sans",sans-serif'>INSPIRRRD</text></g><rect x="191.9" y="584.2" width="104.6" height="61.6" rx="13" fill="#94bc98" stroke="#1e4a3c" stroke-width="1.6"/><g transform="translate(244.20,609.10) scale(0.8817,1)"><text x="0.72" y="0" text-anchor="middle" font-size="14.40" letter-spacing="1.44" fill="#0c0c0c" stroke="#0c0c0c" stroke-width="0.5" font-family='"Liberation Sans",sans-serif'>BE</text></g><g transform="translate(244.20,627.30) scale(0.8817,1)"><text x="0.72" y="0" text-anchor="middle" font-size="14.40" letter-spacing="1.44" fill="#0c0c0c" stroke="#0c0c0c" stroke-width="0.5" font-family='"Liberation Sans",sans-serif'>INSPIRRRD</text></g></g></g><clipPath id="tk41"><rect x="1523" y="469" width="76" height="39"/></clipPath><g clip-path="url(#tk41)"><rect x="1523" y="469" width="76" height="76" fill="#eedad4"/><g transform="translate(1523,469) scale(0.28044) translate(-216,-378.500)"><rect x="191.9" y="380.3" width="104.6" height="61.6" rx="13" fill="#ff5a1f" stroke="#7a2a10" stroke-width="1.6"/><g transform="translate(244.20,405.20) scale(0.8817,1)"><text x="0.72" y="0" text-anchor="middle" font-size="14.40" letter-spacing="1.44" fill="#0c0c0c" stroke="#0c0c0c" stroke-width="0.5" font-family='"Liberation Sans",sans-serif'>BE</text></g><g transform="translate(244.20,423.40) scale(0.8817,1)"><text x="0.72" y="0" text-anchor="middle" font-size="14.40" letter-spacing="1.44" fill="#0c0c0c" stroke="#0c0c0c" stroke-width="0.5" font-family='"Liberation Sans",sans-serif'>INSPIRRRD</text></g><rect x="303.6" y="380.3" width="105.8" height="61.6" rx="13" fill="#cc8a6e" stroke="#5a4037" stroke-width="1.6"/><g transform="translate(356.50,405.20) scale(0.8817,1)"><text x="0.72" y="0" text-anchor="middle" font-size="14.40" letter-spacing="1.44" fill="#0c0c0c" stroke="#0c0c0c" stroke-width="0.5" font-family='"Liberation Sans",sans-serif'>BE</text></g><g transform="translate(356.50,423.40) scale(0.8817,1)"><text x="0.72" y="0" text-anchor="middle" font-size="14.40" letter-spacing="1.44" fill="#0c0c0c" stroke="#0c0c0c" stroke-width="0.5" font-family='"Liberation Sans",sans-serif'>INSPIRRRD</text></g><rect x="416.6" y="380.3" width="104.3" height="61.6" rx="13" fill="#4d8dff" stroke="#1a3eb0" stroke-width="1.6"/><g transform="translate(468.75,405.20) scale(0.8817,1)"><text x="0.72" y="0" text-anchor="middle" font-size="14.40" letter-spacing="1.44" fill="#0c0c0c" stroke="#0c0c0c" stroke-width="0.5" font-family='"Liberation Sans",sans-serif'>BE</text></g><g transform="translate(468.75,423.40) scale(0.8817,1)"><text x="0.72" y="0" text-anchor="middle" font-size="14.40" letter-spacing="1.44" fill="#0c0c0c" stroke="#0c0c0c" stroke-width="0.5" font-family='"Liberation Sans",sans-serif'>INSPIRRRD</text></g><rect x="191.9" y="448.4" width="104.6" height="61.6" rx="13" fill="#f20587" stroke="#3fe0b8" stroke-width="1.6"/><g transform="translate(244.20,473.30) scale(0.8817,1)"><text x="0.72" y="0" text-anchor="middle" font-size="14.40" letter-spacing="1.44" fill="#0c0c0c" stroke="#0c0c0c" stroke-width="0.5" font-family='"Liberation Sans",sans-serif'>BE</text></g><g transform="translate(244.20,491.50) scale(0.8817,1)"><text x="0.72" y="0" text-anchor="middle" font-size="14.40" letter-spacing="1.44" fill="#0c0c0c" stroke="#0c0c0c" stroke-width="0.5" font-family='"Liberation Sans",sans-serif'>INSPIRRRD</text></g><rect x="303.6" y="448.4" width="105.8" height="61.6" rx="13" fill="#f542f0" stroke="#8a1aa8" stroke-width="1.6"/><g transform="translate(356.50,473.30) scale(0.8817,1)"><text x="0.72" y="0" text-anchor="middle" font-size="14.40" letter-spacing="1.44" fill="#0c0c0c" stroke="#0c0c0c" stroke-width="0.5" font-family='"Liberation Sans",sans-serif'>BE</text></g><g transform="translate(356.50,491.50) scale(0.8817,1)"><text x="0.72" y="0" text-anchor="middle" font-size="14.40" letter-spacing="1.44" fill="#0c0c0c" stroke="#0c0c0c" stroke-width="0.5" font-family='"Liberation Sans",sans-serif'>INSPIRRRD</text></g><rect x="416.6" y="448.4" width="104.3" height="61.6" rx="13" fill="#0bbf78" stroke="#0a0a0a" stroke-width="1.6"/><g transform="translate(468.75,473.30) scale(0.8817,1)"><text x="0.72" y="0" text-anchor="middle" font-size="14.40" letter-spacing="1.44" fill="#0c0c0c" stroke="#0c0c0c" stroke-width="0.5" font-family='"Liberation Sans",sans-serif'>BE</text></g><g transform="translate(468.75,491.50) scale(0.8817,1)"><text x="0.72" y="0" text-anchor="middle" font-size="14.40" letter-spacing="1.44" fill="#0c0c0c" stroke="#0c0c0c" stroke-width="0.5" font-family='"Liberation Sans",sans-serif'>INSPIRRRD</text></g><rect x="191.9" y="516.3" width="104.6" height="61.6" rx="13" fill="#7390ad" stroke="#6a2ab0" stroke-width="1.6"/><g transform="translate(244.20,541.20) scale(0.8817,1)"><text x="0.72" y="0" text-anchor="middle" font-size="14.40" letter-spacing="1.44" fill="#0c0c0c" stroke="#0c0c0c" stroke-width="0.5" font-family='"Liberation Sans",sans-serif'>BE</text></g><g transform="translate(244.20,559.40) scale(0.8817,1)"><text x="0.72" y="0" text-anchor="middle" font-size="14.40" letter-spacing="1.44" fill="#0c0c0c" stroke="#0c0c0c" stroke-width="0.5" font-family='"Liberation Sans",sans-serif'>INSPIRRRD</text></g><rect x="303.6" y="516.3" width="105.8" height="61.6" rx="13" fill="#d98305" stroke="#5a3a10" stroke-width="1.6"/><g transform="translate(356.50,541.20) scale(0.8817,1)"><text x="0.72" y="0" text-anchor="middle" font-size="14.40" letter-spacing="1.44" fill="#0c0c0c" stroke="#0c0c0c" stroke-width="0.5" font-family='"Liberation Sans",sans-serif'>BE</text></g><g transform="translate(356.50,559.40) scale(0.8817,1)"><text x="0.72" y="0" text-anchor="middle" font-size="14.40" letter-spacing="1.44" fill="#0c0c0c" stroke="#0c0c0c" stroke-width="0.5" font-family='"Liberation Sans",sans-serif'>INSPIRRRD</text></g><rect x="416.6" y="516.3" width="104.3" height="61.6" rx="13" fill="#ff1c24" stroke="#1a10d0" stroke-width="1.6"/><g transform="translate(468.75,541.20) scale(0.8817,1)"><text x="0.72" y="0" text-anchor="middle" font-size="14.40" letter-spacing="1.44" fill="#0c0c0c" stroke="#0c0c0c" stroke-width="0.5" font-family='"Liberation Sans",sans-serif'>BE</text></g><g transform="translate(468.75,559.40) scale(0.8817,1)"><text x="0.72" y="0" text-anchor="middle" font-size="14.40" letter-spacing="1.44" fill="#0c0c0c" stroke="#0c0c0c" stroke-width="0.5" font-family='"Liberation Sans",sans-serif'>INSPIRRRD</text></g><rect x="191.9" y="584.2" width="104.6" height="61.6" rx="13" fill="#94bc98" stroke="#1e4a3c" stroke-width="1.6"/><g transform="translate(244.20,609.10) scale(0.8817,1)"><text x="0.72" y="0" text-anchor="middle" font-size="14.40" letter-spacing="1.44" fill="#0c0c0c" stroke="#0c0c0c" stroke-width="0.5" font-family='"Liberation Sans",sans-serif'>BE</text></g><g transform="translate(244.20,627.30) scale(0.8817,1)"><text x="0.72" y="0" text-anchor="middle" font-size="14.40" letter-spacing="1.44" fill="#0c0c0c" stroke="#0c0c0c" stroke-width="0.5" font-family='"Liberation Sans",sans-serif'>INSPIRRRD</text></g><rect x="303.6" y="584.2" width="105.8" height="61.6" rx="13" fill="#f5a864" stroke="#5de6b0" stroke-width="1.6"/><g transform="translate(356.50,609.10) scale(0.8817,1)"><text x="0.72" y="0" text-anchor="middle" font-size="14.40" letter-spacing="1.44" fill="#0c0c0c" stroke="#0c0c0c" stroke-width="0.5" font-family='"Liberation Sans",sans-serif'>BE</text></g><g transform="translate(356.50,627.30) scale(0.8817,1)"><text x="0.72" y="0" text-anchor="middle" font-size="14.40" letter-spacing="1.44" fill="#0c0c0c" stroke="#0c0c0c" stroke-width="0.5" font-family='"Liberation Sans",sans-serif'>INSPIRRRD</text></g><rect x="416.6" y="584.2" width="104.3" height="61.6" rx="13" fill="#22f0f0" stroke="#103a3a" stroke-width="1.6"/><g transform="translate(468.75,609.10) scale(0.8817,1)"><text x="0.72" y="0" text-anchor="middle" font-size="14.40" letter-spacing="1.44" fill="#0c0c0c" stroke="#0c0c0c" stroke-width="0.5" font-family='"Liberation Sans",sans-serif'>BE</text></g><g transform="translate(468.75,627.30) scale(0.8817,1)"><text x="0.72" y="0" text-anchor="middle" font-size="14.40" letter-spacing="1.44" fill="#0c0c0c" stroke="#0c0c0c" stroke-width="0.5" font-family='"Liberation Sans",sans-serif'>INSPIRRRD</text></g></g></g><circle cx="1140" cy="422.7" r="6.500" fill="#fff" stroke="#1d6fd8" stroke-width="3.600"/><circle cx="1238.5" cy="422.7" r="8.500" fill="#3a3a3a" stroke="#161616" stroke-width="1"/><circle cx="1337" cy="422.7" r="8.500" fill="#3a3a3a" stroke="#161616" stroke-width="1"/><circle cx="1434.5" cy="422.7" r="8.500" fill="#3a3a3a" stroke="#161616" stroke-width="1"/><circle cx="1532" cy="422.7" r="8.500" fill="#3a3a3a" stroke="#161616" stroke-width="1"/></svg>
<div class="t" style="left:1131px;top:438px;width:76px;text-align:center;font-size:14px;line-height:18px;color:#f0f0f0">1</div>
<div class="t" style="left:1229.5px;top:438px;width:76px;text-align:center;font-size:14px;line-height:18px;color:#f0f0f0">2</div>
<div class="t" style="left:1328px;top:438px;width:76px;text-align:center;font-size:14px;line-height:18px;color:#f0f0f0">3</div>
<div class="t" style="left:1425.5px;top:438px;width:76px;text-align:center;font-size:14px;line-height:18px;color:#f0f0f0">4</div>
<div class="t" style="left:1523px;top:438px;width:76px;text-align:center;font-size:14px;line-height:18px;color:#f0f0f0">5</div>
<div class="t" style="left:1119px;top:518.0px;height:18px;line-height:18px;font-size:14px;color:#f0f0f0;font-weight:700;">Image Size</div>
<div class="t" style="left:1119px;top:551px;font-size:14px;line-height:15px;color:#e8e8e8">Width<br>(px)</div>
<div class="t" style="left:1369px;top:551px;font-size:14px;line-height:15px;color:#e8e8e8">Height<br>(px)</div>
<div class="inp" style="left:1167px;top:547px;width:190px;height:38px;"></div>
<div class="t" style="left:1175px;top:555.5px;height:18px;line-height:18px;font-size:14px;color:#e6e6e6;font-weight:400;">1333</div>
<div class="a" style="left:1318px;top:548px;width:1px;height:36px;background:#232323"></div>
<div class="a" style="left:1337.5px;top:548px;width:1px;height:36px;background:#232323"></div>
<svg style="left:1320px;top:558.0px" width="16" height="16" viewBox="-8 -8 16 16"><path d="M-6.500,0h13" stroke="#e6e6e6" stroke-width="1.600"/></svg>
<svg style="left:1339px;top:558.0px" width="16" height="16" viewBox="-8 -8 16 16"><path d="M-6.500,0h13M0,-6.500v13" stroke="#e6e6e6" stroke-width="1.600"/></svg>
<div class="inp" style="left:1422px;top:547px;width:191px;height:38px;"></div>
<div class="t" style="left:1430px;top:555.5px;height:18px;line-height:18px;font-size:14px;color:#e6e6e6;font-weight:400;">1333</div>
<div class="a" style="left:1574px;top:548px;width:1px;height:36px;background:#232323"></div>
<div class="a" style="left:1593.5px;top:548px;width:1px;height:36px;background:#232323"></div>
<svg style="left:1576px;top:558.0px" width="16" height="16" viewBox="-8 -8 16 16"><path d="M-6.500,0h13" stroke="#e6e6e6" stroke-width="1.600"/></svg>
<svg style="left:1595px;top:558.0px" width="16" height="16" viewBox="-8 -8 16 16"><path d="M-6.500,0h13M0,-6.500v13" stroke="#e6e6e6" stroke-width="1.600"/></svg>
<div class="t" style="left:1119px;top:600.5px;height:18px;line-height:18px;font-size:14px;color:#e8e8e8;font-weight:400;">DPI</div>
<div class="inp" style="left:1167px;top:592px;width:190px;height:38px;"></div>
<div class="t" style="left:1175px;top:600.5px;height:18px;line-height:18px;font-size:14px;color:#e6e6e6;font-weight:400;">96.00</div>
<div class="a" style="left:1318px;top:593px;width:1px;height:36px;background:#232323"></div>
<div class="a" style="left:1337.5px;top:593px;width:1px;height:36px;background:#232323"></div>
<svg style="left:1320px;top:603.0px" width="16" height="16" viewBox="-8 -8 16 16"><path d="M-6.500,0h13" stroke="#e6e6e6" stroke-width="1.600"/></svg>
<svg style="left:1339px;top:603.0px" width="16" height="16" viewBox="-8 -8 16 16"><path d="M-6.500,0h13M0,-6.500v13" stroke="#e6e6e6" stroke-width="1.600"/></svg>
<div class="a" style="left:1098.3px;top:562.5px;width:3px;height:3px;background:#eee;border-radius:50%"></div>
<div class="a" style="left:1098.3px;top:567.5px;width:3px;height:3px;background:#eee;border-radius:50%"></div>
<div class="a" style="left:1098.3px;top:572.5px;width:3px;height:3px;background:#eee;border-radius:50%"></div>
<div class="a" style="left:1433px;top:745px;width:17px;height:17px;background:#303030;border:1px solid #1a1a1a;border-radius:3px"></div>
<div class="t" style="left:1455px;top:743.5px;height:18px;line-height:18px;font-size:14px;color:#f0f0f0;font-weight:400;">Export Selected only</div>
<div class="btn" style="left:1428px;top:766px;width:59px;height:37px;"></div>
<div class="a" style="left:1439px;top:771px;width:37px;height:26px;border-radius:4px;overflow:hidden;background:#fff"><div class="a" style="left:0;top:0;width:18px;height:26px;background:#b8b8b8 conic-gradient(#d6d6d6 25%,#b4b4b4 0 50%,#d6d6d6 0 75%,#b4b4b4 0) 0 0/9px 9px"></div></div>
<div class="t" style="left:1495px;top:774.5px;height:18px;line-height:18px;font-size:14px;color:#f0f0f0;font-weight:400;">Background colour</div>
<div class="inp" style="left:1119px;top:817px;width:199px;height:38px;"></div>
<div class="t" style="left:1125.5px;top:826.0px;height:18px;line-height:18px;font-size:14px;color:#f0f0f0;font-weight:400;">design/Be Inspirrrd/1.png</div>
<div class="a" style="left:1120px;top:818px;width:8px;height:36px;background:#2a2a2a;border-radius:5px 0 0 5px"></div>
<svg style="left:1288.0px;top:825.0px" width="22" height="22" viewBox="-11 -11 22 22"><path d="M-7,6v-12h5l1.500,2h6.500v2.500" fill="none" stroke="#efefef" stroke-width="1.800" stroke-linejoin="round"/><path d="M-7,6.500l3,-7h12l-3,7z" fill="none" stroke="#efefef" stroke-width="1.800" stroke-linejoin="round"/></svg>
<div class="btn" style="left:1325px;top:817px;width:253px;height:38px;"></div>
<div class="t" style="left:1338px;top:826.5px;height:18px;line-height:18px;font-size:14px;color:#f0f0f0;font-weight:400;">Portable Network Graphic (*.png)</div>
<svg style="left:1546.0px;top:824.5px" width="24" height="24" viewBox="-12 -12 24 24"><path d="M-6.500,-3.500h13l-6.500,7z" fill="#efefef"/></svg>
<div class="btn" style="left:1580px;top:817px;width:39px;height:38px;"></div>
<svg style="left:1588.5px;top:825.0px" width="22" height="22" viewBox="-11 -11 22 22"><rect x="-1.300" y="-8" width="2.600" height="4" fill="#efefef" transform="rotate(0)"/><rect x="-1.300" y="-8" width="2.600" height="4" fill="#efefef" transform="rotate(45)"/><rect x="-1.300" y="-8" width="2.600" height="4" fill="#efefef" transform="rotate(90)"/><rect x="-1.300" y="-8" width="2.600" height="4" fill="#efefef" transform="rotate(135)"/><rect x="-1.300" y="-8" width="2.600" height="4" fill="#efefef" transform="rotate(180)"/><rect x="-1.300" y="-8" width="2.600" height="4" fill="#efefef" transform="rotate(225)"/><rect x="-1.300" y="-8" width="2.600" height="4" fill="#efefef" transform="rotate(270)"/><rect x="-1.300" y="-8" width="2.600" height="4" fill="#efefef" transform="rotate(315)"/><circle cx="0" cy="0" r="4.600" fill="none" stroke="#efefef" stroke-width="2.400"/></svg>
<div class="btn" style="left:1113px;top:863px;width:506px;height:37px;text-align:center;line-height:34px;font-size:14px;color:#f0f0f0">Export</div>
<div class="a" style="left:1107px;top:907px;width:525px;height:8px;background:#353535"></div>
<div class="a" style="left:0px;top:914px;width:1632px;height:41px;background:#353535"></div>
<div class="a" style="left:2px;top:915px;width:37px;height:38px;background:#fff"></div>
<svg style="left:2px;top:915px" width="37" height="38" viewBox="0 0 37 38"><path d="M2,2L35,36M35,2L2,36" stroke="#c9102f" stroke-width="3"/></svg>
<div class="a" style="left:40px;top:915px;width:38px;height:38px;background:#000"></div>
<div class="a" style="left:79px;top:915px;width:38px;height:38px;background:#fff"></div>
<svg style="left:0;top:934.500px" width="1650" height="19" viewBox="0 0 1650 19"><rect x="117.90" y="0" width="18.700" height="19" fill="#1a1a1a"/><rect x="137.38" y="0" width="18.700" height="19" fill="#333333"/><rect x="156.86" y="0" width="18.700" height="19" fill="#4d4d4d"/><rect x="176.34" y="0" width="18.700" height="19" fill="#666666"/><rect x="195.82" y="0" width="18.700" height="19" fill="#808080"/><rect x="215.30" y="0" width="18.700" height="19" fill="#999999"/><rect x="234.78" y="0" width="18.700" height="19" fill="#b3b3b3"/><rect x="254.26" y="0" width="18.700" height="19" fill="#cccccc"/><rect x="273.74" y="0" width="18.700" height="19" fill="#e6e6e6"/><rect x="293.22" y="0" width="18.700" height="19" fill="#ececec"/><rect x="312.70" y="0" width="18.700" height="19" fill="#f2f2f2"/><rect x="332.18" y="0" width="18.700" height="19" fill="#f9f9f9"/><rect x="351.66" y="0" width="18.700" height="19" fill="#800000"/><rect x="371.14" y="0" width="18.700" height="19" fill="#ff0000"/><rect x="390.62" y="0" width="18.700" height="19" fill="#808000"/><rect x="410.10" y="0" width="18.700" height="19" fill="#ffff00"/><rect x="429.58" y="0" width="18.700" height="19" fill="#008000"/><rect x="449.06" y="0" width="18.700" height="19" fill="#00ff00"/><rect x="468.54" y="0" width="18.700" height="19" fill="#008080"/><rect x="488.02" y="0" width="18.700" height="19" fill="#00ffff"/><rect x="507.50" y="0" width="18.700" height="19" fill="#000080"/><rect x="526.98" y="0" width="18.700" height="19" fill="#0000ff"/><rect x="546.46" y="0" width="18.700" height="19" fill="#800080"/><rect x="565.94" y="0" width="18.700" height="19" fill="#ff00ff"/><rect x="585.42" y="0" width="18.700" height="19" fill="#2b0000"/><rect x="604.90" y="0" width="18.700" height="19" fill="#550000"/><rect x="624.38" y="0" width="18.700" height="19" fill="#800000"/><rect x="643.86" y="0" width="18.700" height="19" fill="#aa0000"/><rect x="663.34" y="0" width="18.700" height="19" fill="#d40000"/><rect x="682.82" y="0" width="18.700" height="19" fill="#ff0000"/><rect x="702.30" y="0" width="18.700" height="19" fill="#ff2a2a"/><rect x="721.78" y="0" width="18.700" height="19" fill="#ff5555"/><rect x="741.26" y="0" width="18.700" height="19" fill="#ff8080"/><rect x="760.74" y="0" width="18.700" height="19" fill="#ffaaaa"/><rect x="780.22" y="0" width="18.700" height="19" fill="#ffd5d5"/><rect x="799.70" y="0" width="18.700" height="19" fill="#280b0b"/><rect x="819.18" y="0" width="18.700" height="19" fill="#501616"/><rect x="838.66" y="0" width="18.700" height="19" fill="#782121"/><rect x="858.14" y="0" width="18.700" height="19" fill="#a02c2c"/><rect x="877.62" y="0" width="18.700" height="19" fill="#c83737"/><rect x="897.10" y="0" width="18.700" height="19" fill="#d35f5f"/><rect x="916.58" y="0" width="18.700" height="19" fill="#de8787"/><rect x="936.06" y="0" width="18.700" height="19" fill="#e9afaf"/><rect x="955.54" y="0" width="18.700" height="19" fill="#f4d7d7"/><rect x="975.02" y="0" width="18.700" height="19" fill="#241c1c"/><rect x="994.50" y="0" width="18.700" height="19" fill="#483737"/><rect x="1013.98" y="0" width="18.700" height="19" fill="#6c5353"/><rect x="1033.46" y="0" width="18.700" height="19" fill="#916f6f"/><rect x="1052.94" y="0" width="18.700" height="19" fill="#ac9393"/><rect x="1072.42" y="0" width="18.700" height="19" fill="#c8b7b7"/><rect x="1091.90" y="0" width="18.700" height="19" fill="#e3dbdb"/><rect x="1111.38" y="0" width="18.700" height="19" fill="#2b1100"/><rect x="1130.86" y="0" width="18.700" height="19" fill="#552200"/><rect x="1150.34" y="0" width="18.700" height="19" fill="#803300"/><rect x="1169.82" y="0" width="18.700" height="19" fill="#aa4400"/><rect x="1189.30" y="0" width="18.700" height="19" fill="#d45500"/><rect x="1208.78" y="0" width="18.700" height="19" fill="#ff6600"/><rect x="1228.26" y="0" width="18.700" height="19" fill="#ff7f2a"/><rect x="1247.74" y="0" width="18.700" height="19" fill="#ff9955"/><rect x="1267.22" y="0" width="18.700" height="19" fill="#ffb380"/><rect x="1286.70" y="0" width="18.700" height="19" fill="#ffccaa"/><rect x="1306.18" y="0" width="18.700" height="19" fill="#ffe6d5"/><rect x="1325.66" y="0" width="18.700" height="19" fill="#28170b"/><rect x="1345.14" y="0" width="18.700" height="19" fill="#502d16"/><rect x="1364.62" y="0" width="18.700" height="19" fill="#784421"/><rect x="1384.10" y="0" width="18.700" height="19" fill="#a05a2c"/><rect x="1403.58" y="0" width="18.700" height="19" fill="#c87137"/><rect x="1423.06" y="0" width="18.700" height="19" fill="#d38d5f"/><rect x="1442.54" y="0" width="18.700" height="19" fill="#deaa87"/><rect x="1462.02" y="0" width="18.700" height="19" fill="#e9c6af"/><rect x="1481.50" y="0" width="18.700" height="19" fill="#f4e3d7"/><rect x="1500.98" y="0" width="18.700" height="19" fill="#241f1c"/></svg>
<svg style="left:1541.5px;top:922.0px" width="24" height="24" viewBox="-12 -12 24 24"><path d="M-6.500,3.500l6.500,-6.500 6.500,6.500" fill="none" stroke="#efefef" stroke-width="2"/></svg>
<svg style="left:1576.5px;top:922.0px" width="24" height="24" viewBox="-12 -12 24 24"><path d="M-6.500,-3.500l6.500,6.500 6.500,-6.500" fill="none" stroke="#efefef" stroke-width="2"/></svg>
<div class="a" style="left:1608px;top:923px;width:22px;height:30px;background:#2e2e2e;border:1px solid #1e1e1e;border-radius:5px"></div>
<svg style="left:1607.0px;top:926.0px" width="24" height="24" viewBox="-12 -12 24 24"><path d="M-7,-6h14M-7,-2h14M-7,2h14M-7,6h14" stroke="#efefef" stroke-width="1.500"/></svg>
<div class="a" style="left:0px;top:954px;width:1632px;height:40.5px;background:#353535;border-radius:0 0 10px 10px"></div>
<div class="t" style="left:24px;top:955.5px;height:18px;line-height:18px;font-size:14px;color:#f0f0f0;font-weight:400;">Fill:</div>
<div class="t" style="left:2.5px;top:975.0px;height:18px;line-height:18px;font-size:14px;color:#f0f0f0;font-weight:400;">Stroke:</div>
<div class="t" style="left:81px;top:955.5px;height:18px;line-height:18px;font-size:14px;color:#f0f0f0;font-weight:400;">N/A</div>
<div class="t" style="left:81px;top:975.0px;height:18px;line-height:18px;font-size:14px;color:#f0f0f0;font-weight:400;">N/A</div>
<div class="t" style="left:171px;top:965.0px;height:18px;line-height:18px;font-size:14px;color:#e0e0e0;font-weight:400;">O:</div>
<div class="inp" style="left:188px;top:956.5px;width:82px;height:38px;background:#313131"></div>
<div class="t" style="left:196px;top:965.5px;height:18px;line-height:18px;font-size:14px;color:#8a8a8a;font-weight:400;">100</div>
<div class="a" style="left:230px;top:958px;width:1px;height:35px;background:#232323"></div>
<div class="a" style="left:250px;top:958px;width:1px;height:35px;background:#232323"></div>
<svg style="left:232px;top:966px" width="36" height="16" viewBox="0 0 36 16"><path d="M2,8h13M21,8h13M27.500,1.500v13" stroke="#555" stroke-width="1.600"/></svg>
<div class="a" style="left:299px;top:965.5px;width:3px;height:17px;background:#3b78e7;border-radius:1px"></div>
<div class="t" style="left:309px;top:965.0px;height:18px;line-height:18px;font-size:14px;color:#f0f0f0;font-weight:400;">Layer 1</div>
<svg style="left:377.0px;top:963.0px" width="22" height="22" viewBox="-11 -11 22 22"><path d="M-8,1c2,-4 5,-5.500 8,-5.500s6,1.500 8,5.500c-2,4-5,5.500-8,5.500s-6,-1.500-8,-5.500z" fill="none" stroke="#efefef" stroke-width="1.800"/><circle cx="0" cy="1" r="2.600" fill="#efefef"/><path d="M-5,-6l1,2M0,-7.500v2.500M5,-6l-1,2" stroke="#efefef" stroke-width="1.500"/></svg>
<svg style="left:420.0px;top:963.0px" width="22" height="22" viewBox="-11 -11 22 22"><rect x="-7" y="0" width="10" height="8" rx="1" fill="#efefef"/><path d="M0,0v-3a3.300,3.300 0 0 1 6.600,0v1.500" fill="none" stroke="#efefef" stroke-width="1.900"/></svg>
<div class="a" style="left:450px;top:958px;width:1px;height:34px;background:#2c2c2c"></div>
<div class="t" style="left:460px;top:965px;font-size:13.900px;line-height:18px;color:#f0f0f0"><b>Ctrl</b>: Select inside groups, Move one axis only; <b>Shift</b>: Add to selection</div>
<svg style="left:1104.0px;top:962.5px" width="24" height="24" viewBox="-12 -12 24 24"><path d="M3,-6v12l-6,-6z" fill="#777"/></svg>
<div class="btn" style="left:1137px;top:956px;width:79px;height:38px;"></div>
<div class="t" style="left:1151px;top:966.5px;height:15px;line-height:15px;font-size:11px;color:#f0f0f0;font-weight:400;font-family:"Liberation Mono",monospace;letter-spacing:.5px">1.1</div>
<svg style="left:1184.0px;top:963.0px" width="24" height="24" viewBox="-12 -12 24 24"><path d="M-6.500,-3.500h13l-6.500,7z" fill="#efefef"/></svg>
<svg style="left:1225.0px;top:962.5px" width="24" height="24" viewBox="-12 -12 24 24"><path d="M-3,-6.500v13l6.500,-6.500z" fill="#efefef"/></svg>
<div class="a" style="left:1258px;top:958px;width:1px;height:34px;background:#2c2c2c"></div>
<div class="t" style="left:1271px;top:954.5px;height:18px;line-height:18px;font-size:14px;color:#f0f0f0;font-weight:400;">X:</div>
<div class="t" style="left:1271px;top:969.5px;height:18px;line-height:18px;font-size:14px;color:#f0f0f0;font-weight:400;">Y:</div>
<div class="t" style="left:1270px;top:955.500px;width:76px;text-align:right;font-size:14px;line-height:15px;color:#f0f0f0">1762.71<br>1508.47</div>
<div class="t" style="left:1357px;top:965.0px;height:18px;line-height:18px;font-size:14px;color:#f0f0f0;font-weight:400;">Z:</div>
<div class="inp" style="left:1370px;top:956px;width:106px;height:38px;"></div>
<div class="t" style="left:1382px;top:965.0px;height:18px;line-height:18px;font-size:14px;color:#f0f0f0;font-weight:400;">18%</div>
<div class="a" style="left:1426px;top:957px;width:1px;height:36px;background:#232323"></div>
<div class="a" style="left:1450px;top:957px;width:1px;height:36px;background:#232323"></div>
<svg style="left:1430px;top:966px" width="42" height="16" viewBox="0 0 42 16"><path d="M2,8h13M25,8h13M31.500,1.500v13" stroke="#efefef" stroke-width="1.600"/></svg>
<div class="t" style="left:1488px;top:965.0px;height:18px;line-height:18px;font-size:14px;color:#f0f0f0;font-weight:400;">R:</div>
<div class="inp" style="left:1503px;top:956px;width:114px;height:38px;"></div>
<div class="t" style="left:1518px;top:965.0px;height:18px;line-height:18px;font-size:14px;color:#f0f0f0;font-weight:400;">0.00°</div>
<svg style="left:1571px;top:966px" width="42" height="16" viewBox="0 0 42 16"><path d="M2,8h13M25,8h13M31.500,1.500v13" stroke="#efefef" stroke-width="1.600"/></svg>
<svg style="left:17.5px;top:68.5px" width="26" height="26" viewBox="-12 -12 24 24"><path d="M2.500,-6.500c.2,-1.800 1.500,-3 3,-3.300 .2,1.800-1.200,3.300-3,3.300zM6.500,4.500c-.8,2-2,4-3.600,4-1.200,0-1.600,-.7-3,-.7s-1.900,.7-3,.7c-2.200,0-4.700,-4.300-4.700,-7.700 0,-3.300 2.100,-5 4.200,-5 1.300,0 2.300,.8 3.200,.8 .8,0 2.100,-.9 3.600,-.9 1.300,0 2.500,.6 3.300,1.700-2.600,1.500-2.200,5.500 0,7.100z" fill="#fff" transform="translate(1,1)"/></svg>
<svg style="left:1302.0px;top:71.0px" width="22" height="22" viewBox="-11 -11 22 22"><circle cx="0" cy="-4" r="3.400" fill="#fff"/><circle cx="-4.200" cy="3.300" r="3.400" fill="#fff"/><circle cx="4.200" cy="3.300" r="3.400" fill="#fff"/></svg>
<svg style="left:1339.0px;top:67.0px" width="30" height="30" viewBox="-15 -15 30 30"><rect x="-13" y="-6" width="24" height="12" rx="3.500" fill="none" stroke="#fff" stroke-opacity=".6" stroke-width="1.200"/><rect x="-11" y="-4" width="10" height="8" rx="1.800" fill="#fff"/><path d="M12.500,-2v4" stroke="#fff" stroke-opacity=".6" stroke-width="1.500" stroke-linecap="round"/></svg>
<svg style="left:1389.0px;top:70.0px" width="24" height="24" viewBox="-12 -12 24 24"><path d="M-10,-3a14,14 0 0 1 20,0M-6.500,1a9,9 0 0 1 13,0M-3,4.500a4.300,4.300 0 0 1 6,0" fill="none" stroke="#fff" stroke-width="2.200" stroke-linecap="round"/><circle cx="0" cy="7.500" r="1.400" fill="#fff"/></svg>
<svg style="left:1430.0px;top:71.0px" width="22" height="22" viewBox="-11 -11 22 22"><circle cx="-1.500" cy="-1.500" r="5" fill="none" stroke="#fff" stroke-width="1.700"/><path d="M2.300,2.300l4.500,4.500" stroke="#fff" stroke-width="1.900" stroke-linecap="round"/></svg>
<svg style="left:1468.5px;top:71.0px" width="22" height="22" viewBox="-11 -11 22 22"><rect x="-7.500" y="-7.500" width="15" height="6.500" rx="3.250" fill="none" stroke="#fff" stroke-width="1.400"/><circle cx="-4" cy="-4.250" r="1.700" fill="#fff"/><rect x="-7.500" y="1" width="15" height="6.500" rx="3.250" fill="#fff"/><circle cx="4" cy="4.250" r="1.700" fill="#1b4476"/></svg>
<svg style="left:1420px;top:980px" width="200" height="70" viewBox="1420 980 200 70"><defs><filter id="xs" x="-10%" y="-20%" width="120%" height="160%"><feGaussianBlur stdDeviation="2.200"/></filter></defs><g opacity=".45" filter="url(#xs)" transform="translate(-2,3.500)"><path d="M1435,990H1449.700V994H1441V1017.600H1449.700V1034L1441.800,1023H1435Z" fill="#5a2030"/><path d="M1456.400,990H1471V1023H1456.400V1017.600H1464.800V994H1456.400Z" fill="#5a2030"/><text x="1479" y="1023" font-size="46" font-weight="700" fill="#5a2030" stroke="#5a2030" stroke-width="1.400" textLength="108" lengthAdjust="spacingAndGlyphs" font-family='"Liberation Sans",sans-serif'>XDA</text></g><g opacity=".88"><path d="M1435,990H1449.700V994H1441V1017.600H1449.700V1034L1441.800,1023H1435Z" fill="#f0849c"/><path d="M1456.400,990H1471V1023H1456.400V1017.600H1464.800V994H1456.400Z" fill="#8fbce6"/><text x="1479" y="1023" font-size="46" font-weight="700" fill="#fff0f2" stroke="#fff0f2" stroke-width="1.400" textLength="108" lengthAdjust="spacingAndGlyphs" font-family='"Liberation Sans",sans-serif'>XDA</text></g></svg>
</body></html>
